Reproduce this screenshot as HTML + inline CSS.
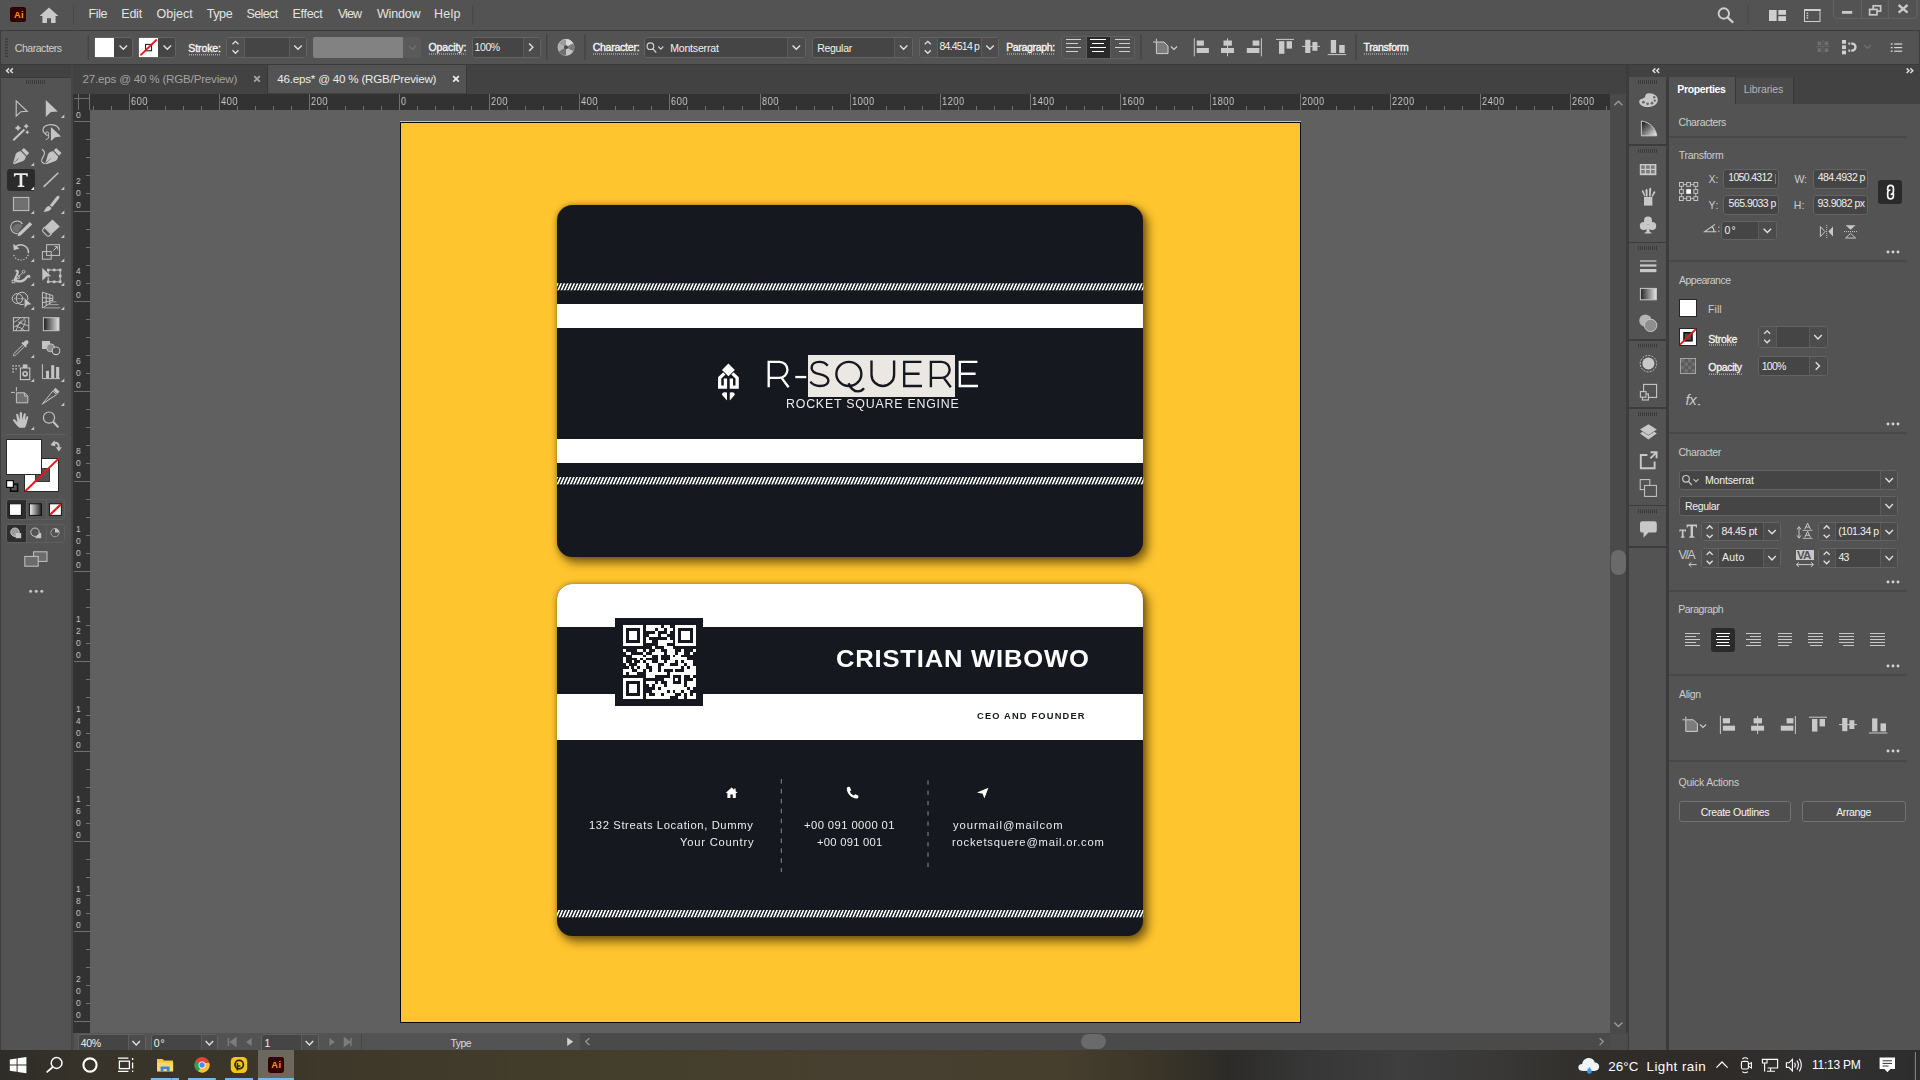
<!DOCTYPE html>
<html><head><meta charset="utf-8"><title>Adobe Illustrator</title><style>
*{margin:0;padding:0;box-sizing:border-box}
html,body{width:1920px;height:1080px;overflow:hidden;background:#535353;font-family:"Liberation Sans",sans-serif}
#root{position:relative;width:1920px;height:1080px;overflow:hidden;background:#535353}
.a{position:absolute}
.t{position:absolute;white-space:pre;}
svg{position:absolute;overflow:visible}
.fld{position:absolute;border:1px solid #636363;border-radius:3px;background:#454545;overflow:hidden}
</style></head>
<body><div id="root">
<!-- s_top -->
<div class="a" style="left:0px;top:0px;width:1920px;height:30px;background:#535353;"></div>
<div class="a" style="left:0px;top:30px;width:1920px;height:1px;background:#3c3c3c;"></div>
<div class="a" style="left:10px;top:7px;width:16px;height:15px;background:#330000;border-radius:2.5px"></div>
<div class="t" style="left:13.97px;top:11px;font-size:9.2px;line-height:9.2px;letter-spacing:0.274px;color:#ff9a00;font-weight:700;font-family:'Liberation Sans',sans-serif;">Ai</div>
<div class="t" style="left:88.40px;top:8px;font-size:12.5px;line-height:12.5px;letter-spacing:-0.321px;color:#e4e4e4;font-weight:400;font-family:'Liberation Sans',sans-serif;">File</div>
<div class="t" style="left:121.30px;top:8px;font-size:12.5px;line-height:12.5px;letter-spacing:-0.246px;color:#e4e4e4;font-weight:400;font-family:'Liberation Sans',sans-serif;">Edit</div>
<div class="t" style="left:156.44px;top:8px;font-size:12.5px;line-height:12.5px;letter-spacing:0.013px;color:#e4e4e4;font-weight:400;font-family:'Liberation Sans',sans-serif;">Object</div>
<div class="t" style="left:206.75px;top:8px;font-size:12.5px;line-height:12.5px;letter-spacing:-0.417px;color:#e4e4e4;font-weight:400;font-family:'Liberation Sans',sans-serif;">Type</div>
<div class="t" style="left:246.44px;top:8px;font-size:12.5px;line-height:12.5px;letter-spacing:-0.613px;color:#e4e4e4;font-weight:400;font-family:'Liberation Sans',sans-serif;">Select</div>
<div class="t" style="left:292.50px;top:8px;font-size:12.5px;line-height:12.5px;letter-spacing:-0.285px;color:#e4e4e4;font-weight:400;font-family:'Liberation Sans',sans-serif;">Effect</div>
<div class="t" style="left:337.94px;top:8px;font-size:12.5px;line-height:12.5px;letter-spacing:-0.938px;color:#e4e4e4;font-weight:400;font-family:'Liberation Sans',sans-serif;">View</div>
<div class="t" style="left:376.94px;top:8px;font-size:12.5px;line-height:12.5px;letter-spacing:-0.167px;color:#e4e4e4;font-weight:400;font-family:'Liberation Sans',sans-serif;">Window</div>
<div class="t" style="left:434.00px;top:8px;font-size:12.5px;line-height:12.5px;letter-spacing:0.271px;color:#e4e4e4;font-weight:400;font-family:'Liberation Sans',sans-serif;">Help</div>
<div class="a" style="left:0px;top:31px;width:1920px;height:32.5px;background:#535353;"></div>
<div class="a" style="left:0px;top:63.5px;width:1920px;height:1.5px;background:#3a3a3a;"></div>
<div class="a" style="left:0px;top:31px;width:1.2px;height:33px;background:#3e3e3e;"></div>
<div class="a" style="left:1918.8px;top:31px;width:1.2000000000000455px;height:33px;background:#3e3e3e;"></div>
<div class="t" style="left:14.78px;top:43px;font-size:10.5px;line-height:10.5px;letter-spacing:-0.450px;color:#cfcfcf;font-weight:400;font-family:'Liberation Sans',sans-serif;">Characters</div>
<div class="fld" style="left:94px;top:37px;width:38.5px;height:20.6px"></div>
<div class="a" style="left:95px;top:38.2px;width:19.200000000000003px;height:18.4px;background:#ffffff;"></div>
<div class="fld" style="left:138.3px;top:37px;width:38.099999999999994px;height:20.6px"></div>
<div class="a" style="left:139.2px;top:38.2px;width:19.100000000000023px;height:18.4px;background:#ffffff;"></div>
<div class="t" style="left:188.33px;top:43px;font-size:10.5px;line-height:10.5px;letter-spacing:-0.103px;color:#f6f6f6;font-weight:400;font-family:'Liberation Sans',sans-serif;-webkit-text-stroke:0.35px #f6f6f6;">Stroke:</div>
<div class="fld" style="left:226.3px;top:37px;width:80.69999999999999px;height:20.6px"></div>
<div class="a" style="left:227.3px;top:38px;width:16.69999999999999px;height:18.6px;background:#4f4f4f;"></div>
<div class="a" style="left:244px;top:38px;width:1px;height:18.6px;background:#5c5c5c;"></div>
<div class="a" style="left:289px;top:38px;width:1px;height:18.6px;background:#5c5c5c;"></div>
<div class="a" style="left:290px;top:38px;width:16px;height:18.6px;background:#4c4c4c;"></div>
<div class="a" style="left:312.8px;top:37px;width:90.19999999999999px;height:20.799999999999997px;background:#828282;border-radius:2px 0 0 2px"></div>
<div class="a" style="left:403px;top:37px;width:18px;height:20.799999999999997px;background:#5a5a5a;border-radius:0 2px 2px 0"></div>
<div class="t" style="left:428.53px;top:42px;font-size:10.5px;line-height:10.5px;letter-spacing:-0.095px;color:#f6f6f6;font-weight:400;font-family:'Liberation Sans',sans-serif;-webkit-text-stroke:0.35px #f6f6f6;">Opacity:</div>
<div class="fld" style="left:471.6px;top:37px;width:69.0px;height:20.6px"></div>
<div class="a" style="left:522.6px;top:38px;width:1.0px;height:18.6px;background:#5c5c5c;"></div>
<div class="a" style="left:523.6px;top:38px;width:16.0px;height:18.6px;background:#4c4c4c;"></div>
<div class="t" style="left:474.61px;top:42px;font-size:10.5px;line-height:10.5px;letter-spacing:-0.442px;color:#f0f0f0;font-weight:400;font-family:'Liberation Sans',sans-serif;">100%</div>
<div class="t" style="left:592.68px;top:42px;font-size:10.5px;line-height:10.5px;letter-spacing:-0.235px;color:#f6f6f6;font-weight:400;font-family:'Liberation Sans',sans-serif;-webkit-text-stroke:0.35px #f6f6f6;">Character:</div>
<div class="fld" style="left:644px;top:37px;width:161.60000000000002px;height:20.6px"></div>
<div class="a" style="left:787.2px;top:38px;width:1.0px;height:18.6px;background:#5c5c5c;"></div>
<div class="a" style="left:788.2px;top:38px;width:16.399999999999977px;height:18.6px;background:#4c4c4c;"></div>
<div class="t" style="left:670.16px;top:43px;font-size:10.5px;line-height:10.5px;letter-spacing:-0.161px;color:#f2f2f2;font-weight:400;font-family:'Liberation Sans',sans-serif;">Montserrat</div>
<div class="fld" style="left:811.6px;top:37px;width:101.0px;height:20.6px"></div>
<div class="a" style="left:894.2px;top:38px;width:1.0px;height:18.6px;background:#5c5c5c;"></div>
<div class="a" style="left:895.2px;top:38px;width:16.399999999999977px;height:18.6px;background:#4c4c4c;"></div>
<div class="t" style="left:817.16px;top:43px;font-size:10.5px;line-height:10.5px;letter-spacing:-0.292px;color:#f2f2f2;font-weight:400;font-family:'Liberation Sans',sans-serif;">Regular</div>
<div class="fld" style="left:918.5px;top:37px;width:80.5px;height:20.6px"></div>
<div class="a" style="left:919.5px;top:38px;width:17.100000000000023px;height:18.6px;background:#4f4f4f;"></div>
<div class="a" style="left:936.6px;top:38px;width:1.0px;height:18.6px;background:#5c5c5c;"></div>
<div class="a" style="left:981.4px;top:38px;width:1.0px;height:18.6px;background:#5c5c5c;"></div>
<div class="a" style="left:982.4px;top:38px;width:15.600000000000023px;height:18.6px;background:#4c4c4c;"></div>
<div class="t" style="left:939.53px;top:41px;font-size:10.5px;line-height:10.5px;letter-spacing:-0.792px;color:#f2f2f2;font-weight:400;font-family:'Liberation Sans',sans-serif;">84.4514 p</div>
<div class="t" style="left:1006.16px;top:42px;font-size:10.5px;line-height:10.5px;letter-spacing:-0.315px;color:#f6f6f6;font-weight:400;font-family:'Liberation Sans',sans-serif;-webkit-text-stroke:0.35px #f6f6f6;">Paragraph:</div>
<div class="a" style="left:1061.3px;top:35.5px;width:73.7px;height:23.4px;border:1px solid #5f5f5f;border-radius:3px;background:#515151"></div>
<div class="a" style="left:1086px;top:36.5px;width:24px;height:21.5px;background:#2a2a2a;"></div>
<div class="a" style="left:1085.5px;top:36.5px;width:0.5px;height:21.5px;background:#5f5f5f;"></div>
<div class="a" style="left:1110px;top:36.5px;width:0.599999999999909px;height:21.5px;background:#5f5f5f;"></div>
<div class="t" style="left:1363.59px;top:42px;font-size:10.5px;line-height:10.5px;letter-spacing:-0.296px;color:#f6f6f6;font-weight:400;font-family:'Liberation Sans',sans-serif;-webkit-text-stroke:0.35px #f6f6f6;">Transform</div>
<!-- s_canvas -->
<div class="a" style="left:72px;top:65px;width:1556.5px;height:28.5px;background:#424242;"></div>
<div class="a" style="left:268px;top:65.3px;width:198px;height:28.200000000000003px;background:#535353;"></div>
<div class="a" style="left:267px;top:65px;width:1px;height:28.5px;background:#383838;"></div>
<div class="a" style="left:466px;top:65px;width:1px;height:28.5px;background:#383838;"></div>
<div class="t" style="left:82.52px;top:73px;font-size:11.6px;line-height:11.6px;letter-spacing:-0.198px;color:#a3a3a3;font-weight:400;font-family:'Liberation Sans',sans-serif;">27.eps @ 40 % (RGB/Preview)</div>
<div class="t" style="left:277.17px;top:73px;font-size:11.6px;line-height:11.6px;letter-spacing:-0.193px;color:#ececec;font-weight:400;font-family:'Liberation Sans',sans-serif;">46.eps* @ 40 % (RGB/Preview)</div>
<div class="a" style="left:90px;top:110px;width:1520px;height:923px;background:#606060;"></div>
<div class="a" style="left:73.4px;top:93.5px;width:1536.6px;height:16.5px;background:#323232;"></div>
<div class="a" style="left:73.4px;top:110px;width:16.599999999999994px;height:923px;background:#323232;"></div>
<div class="t" style="left:130.9px;top:97px;font-size:10.2px;line-height:10.2px;letter-spacing:0.86px;color:#cdcdcd;transform-origin:0 0;transform:scaleX(.88);will-change:transform;">600</div>
<div class="t" style="left:220.9px;top:97px;font-size:10.2px;line-height:10.2px;letter-spacing:0.86px;color:#cdcdcd;transform-origin:0 0;transform:scaleX(.88);will-change:transform;">400</div>
<div class="t" style="left:310.9px;top:97px;font-size:10.2px;line-height:10.2px;letter-spacing:0.86px;color:#cdcdcd;transform-origin:0 0;transform:scaleX(.88);will-change:transform;">200</div>
<div class="t" style="left:400.9px;top:97px;font-size:10.2px;line-height:10.2px;letter-spacing:0.86px;color:#cdcdcd;transform-origin:0 0;transform:scaleX(.88);will-change:transform;">0</div>
<div class="t" style="left:490.9px;top:97px;font-size:10.2px;line-height:10.2px;letter-spacing:0.86px;color:#cdcdcd;transform-origin:0 0;transform:scaleX(.88);will-change:transform;">200</div>
<div class="t" style="left:580.9px;top:97px;font-size:10.2px;line-height:10.2px;letter-spacing:0.86px;color:#cdcdcd;transform-origin:0 0;transform:scaleX(.88);will-change:transform;">400</div>
<div class="t" style="left:670.9px;top:97px;font-size:10.2px;line-height:10.2px;letter-spacing:0.86px;color:#cdcdcd;transform-origin:0 0;transform:scaleX(.88);will-change:transform;">600</div>
<div class="t" style="left:761.9px;top:97px;font-size:10.2px;line-height:10.2px;letter-spacing:0.86px;color:#cdcdcd;transform-origin:0 0;transform:scaleX(.88);will-change:transform;">800</div>
<div class="t" style="left:851.9px;top:97px;font-size:10.2px;line-height:10.2px;letter-spacing:0.86px;color:#cdcdcd;transform-origin:0 0;transform:scaleX(.88);will-change:transform;">1000</div>
<div class="t" style="left:941.9px;top:97px;font-size:10.2px;line-height:10.2px;letter-spacing:0.86px;color:#cdcdcd;transform-origin:0 0;transform:scaleX(.88);will-change:transform;">1200</div>
<div class="t" style="left:1031.9px;top:97px;font-size:10.2px;line-height:10.2px;letter-spacing:0.86px;color:#cdcdcd;transform-origin:0 0;transform:scaleX(.88);will-change:transform;">1400</div>
<div class="t" style="left:1121.9px;top:97px;font-size:10.2px;line-height:10.2px;letter-spacing:0.86px;color:#cdcdcd;transform-origin:0 0;transform:scaleX(.88);will-change:transform;">1600</div>
<div class="t" style="left:1211.9px;top:97px;font-size:10.2px;line-height:10.2px;letter-spacing:0.86px;color:#cdcdcd;transform-origin:0 0;transform:scaleX(.88);will-change:transform;">1800</div>
<div class="t" style="left:1301.9px;top:97px;font-size:10.2px;line-height:10.2px;letter-spacing:0.86px;color:#cdcdcd;transform-origin:0 0;transform:scaleX(.88);will-change:transform;">2000</div>
<div class="t" style="left:1391.9px;top:97px;font-size:10.2px;line-height:10.2px;letter-spacing:0.86px;color:#cdcdcd;transform-origin:0 0;transform:scaleX(.88);will-change:transform;">2200</div>
<div class="t" style="left:1481.9px;top:97px;font-size:10.2px;line-height:10.2px;letter-spacing:0.86px;color:#cdcdcd;transform-origin:0 0;transform:scaleX(.88);will-change:transform;">2400</div>
<div class="t" style="left:1571.9px;top:97px;font-size:10.2px;line-height:10.2px;letter-spacing:0.86px;color:#cdcdcd;transform-origin:0 0;transform:scaleX(.88);will-change:transform;">2600</div>
<div class="t" style="left:75.6px;top:110px;font-size:9.6px;line-height:9.6px;color:#cdcdcd;transform-origin:0 0;transform:scaleX(.88);will-change:transform;">0</div>
<div class="t" style="left:75.6px;top:176px;font-size:9.6px;line-height:9.6px;color:#cdcdcd;transform-origin:0 0;transform:scaleX(.88);will-change:transform;">2</div>
<div class="t" style="left:75.6px;top:188px;font-size:9.6px;line-height:9.6px;color:#cdcdcd;transform-origin:0 0;transform:scaleX(.88);will-change:transform;">0</div>
<div class="t" style="left:75.6px;top:200px;font-size:9.6px;line-height:9.6px;color:#cdcdcd;transform-origin:0 0;transform:scaleX(.88);will-change:transform;">0</div>
<div class="t" style="left:75.6px;top:266px;font-size:9.6px;line-height:9.6px;color:#cdcdcd;transform-origin:0 0;transform:scaleX(.88);will-change:transform;">4</div>
<div class="t" style="left:75.6px;top:278px;font-size:9.6px;line-height:9.6px;color:#cdcdcd;transform-origin:0 0;transform:scaleX(.88);will-change:transform;">0</div>
<div class="t" style="left:75.6px;top:290px;font-size:9.6px;line-height:9.6px;color:#cdcdcd;transform-origin:0 0;transform:scaleX(.88);will-change:transform;">0</div>
<div class="t" style="left:75.6px;top:356px;font-size:9.6px;line-height:9.6px;color:#cdcdcd;transform-origin:0 0;transform:scaleX(.88);will-change:transform;">6</div>
<div class="t" style="left:75.6px;top:368px;font-size:9.6px;line-height:9.6px;color:#cdcdcd;transform-origin:0 0;transform:scaleX(.88);will-change:transform;">0</div>
<div class="t" style="left:75.6px;top:380px;font-size:9.6px;line-height:9.6px;color:#cdcdcd;transform-origin:0 0;transform:scaleX(.88);will-change:transform;">0</div>
<div class="t" style="left:75.6px;top:446px;font-size:9.6px;line-height:9.6px;color:#cdcdcd;transform-origin:0 0;transform:scaleX(.88);will-change:transform;">8</div>
<div class="t" style="left:75.6px;top:458px;font-size:9.6px;line-height:9.6px;color:#cdcdcd;transform-origin:0 0;transform:scaleX(.88);will-change:transform;">0</div>
<div class="t" style="left:75.6px;top:470px;font-size:9.6px;line-height:9.6px;color:#cdcdcd;transform-origin:0 0;transform:scaleX(.88);will-change:transform;">0</div>
<div class="t" style="left:75.6px;top:524px;font-size:9.6px;line-height:9.6px;color:#cdcdcd;transform-origin:0 0;transform:scaleX(.88);will-change:transform;">1</div>
<div class="t" style="left:75.6px;top:536px;font-size:9.6px;line-height:9.6px;color:#cdcdcd;transform-origin:0 0;transform:scaleX(.88);will-change:transform;">0</div>
<div class="t" style="left:75.6px;top:548px;font-size:9.6px;line-height:9.6px;color:#cdcdcd;transform-origin:0 0;transform:scaleX(.88);will-change:transform;">0</div>
<div class="t" style="left:75.6px;top:560px;font-size:9.6px;line-height:9.6px;color:#cdcdcd;transform-origin:0 0;transform:scaleX(.88);will-change:transform;">0</div>
<div class="t" style="left:75.6px;top:614px;font-size:9.6px;line-height:9.6px;color:#cdcdcd;transform-origin:0 0;transform:scaleX(.88);will-change:transform;">1</div>
<div class="t" style="left:75.6px;top:626px;font-size:9.6px;line-height:9.6px;color:#cdcdcd;transform-origin:0 0;transform:scaleX(.88);will-change:transform;">2</div>
<div class="t" style="left:75.6px;top:638px;font-size:9.6px;line-height:9.6px;color:#cdcdcd;transform-origin:0 0;transform:scaleX(.88);will-change:transform;">0</div>
<div class="t" style="left:75.6px;top:650px;font-size:9.6px;line-height:9.6px;color:#cdcdcd;transform-origin:0 0;transform:scaleX(.88);will-change:transform;">0</div>
<div class="t" style="left:75.6px;top:704px;font-size:9.6px;line-height:9.6px;color:#cdcdcd;transform-origin:0 0;transform:scaleX(.88);will-change:transform;">1</div>
<div class="t" style="left:75.6px;top:716px;font-size:9.6px;line-height:9.6px;color:#cdcdcd;transform-origin:0 0;transform:scaleX(.88);will-change:transform;">4</div>
<div class="t" style="left:75.6px;top:728px;font-size:9.6px;line-height:9.6px;color:#cdcdcd;transform-origin:0 0;transform:scaleX(.88);will-change:transform;">0</div>
<div class="t" style="left:75.6px;top:740px;font-size:9.6px;line-height:9.6px;color:#cdcdcd;transform-origin:0 0;transform:scaleX(.88);will-change:transform;">0</div>
<div class="t" style="left:75.6px;top:794px;font-size:9.6px;line-height:9.6px;color:#cdcdcd;transform-origin:0 0;transform:scaleX(.88);will-change:transform;">1</div>
<div class="t" style="left:75.6px;top:806px;font-size:9.6px;line-height:9.6px;color:#cdcdcd;transform-origin:0 0;transform:scaleX(.88);will-change:transform;">6</div>
<div class="t" style="left:75.6px;top:818px;font-size:9.6px;line-height:9.6px;color:#cdcdcd;transform-origin:0 0;transform:scaleX(.88);will-change:transform;">0</div>
<div class="t" style="left:75.6px;top:830px;font-size:9.6px;line-height:9.6px;color:#cdcdcd;transform-origin:0 0;transform:scaleX(.88);will-change:transform;">0</div>
<div class="t" style="left:75.6px;top:884px;font-size:9.6px;line-height:9.6px;color:#cdcdcd;transform-origin:0 0;transform:scaleX(.88);will-change:transform;">1</div>
<div class="t" style="left:75.6px;top:896px;font-size:9.6px;line-height:9.6px;color:#cdcdcd;transform-origin:0 0;transform:scaleX(.88);will-change:transform;">8</div>
<div class="t" style="left:75.6px;top:908px;font-size:9.6px;line-height:9.6px;color:#cdcdcd;transform-origin:0 0;transform:scaleX(.88);will-change:transform;">0</div>
<div class="t" style="left:75.6px;top:920px;font-size:9.6px;line-height:9.6px;color:#cdcdcd;transform-origin:0 0;transform:scaleX(.88);will-change:transform;">0</div>
<div class="t" style="left:75.6px;top:974px;font-size:9.6px;line-height:9.6px;color:#cdcdcd;transform-origin:0 0;transform:scaleX(.88);will-change:transform;">2</div>
<div class="t" style="left:75.6px;top:986px;font-size:9.6px;line-height:9.6px;color:#cdcdcd;transform-origin:0 0;transform:scaleX(.88);will-change:transform;">0</div>
<div class="t" style="left:75.6px;top:998px;font-size:9.6px;line-height:9.6px;color:#cdcdcd;transform-origin:0 0;transform:scaleX(.88);will-change:transform;">0</div>
<div class="t" style="left:75.6px;top:1010px;font-size:9.6px;line-height:9.6px;color:#cdcdcd;transform-origin:0 0;transform:scaleX(.88);will-change:transform;">0</div>
<div class="a" style="left:399.6px;top:120.8px;width:901.6px;height:902.2px;background:#fec52e;"></div>
<div class="a" style="left:400px;top:122px;width:901px;height:901px;border:1px solid #0a0a0a;background:#fec52e"></div>
<div class="a" style="left:399.6px;top:120.8px;width:901.6px;height:1.0px;background:#fec52e;"></div>
<div class="a" style="left:556.8px;top:205px;width:586.6px;height:351.6px;border-radius:15.5px;background:#15181e;box-shadow:4px 5px 10px 1px rgba(45,30,0,.6), 0 0 5px rgba(60,40,0,.38);overflow:hidden"><div class="a" style="left:0;top:99.4px;width:100%;height:23.6px;background:#fff"></div><div class="a" style="left:0;top:234px;width:100%;height:23.7px;background:#fff"></div></div>
<div class="a" style="left:807.8px;top:354.8px;width:147.4000000000001px;height:42.099999999999966px;background:#ebe7e2;"></div>
<div class="a" style="left:556.8px;top:584px;width:586.6px;height:352.4px;border-radius:15.5px;background:#15181e;box-shadow:4px 5px 10px 1px rgba(45,30,0,.6), 0 0 5px rgba(60,40,0,.38);overflow:hidden"><div class="a" style="left:0;top:0;width:100%;height:156.1px;background:#fff"></div><div class="a" style="left:0;top:43.1px;width:100%;height:67.1px;background:#15181e"></div></div>
<div class="a" style="left:615.3px;top:618.1px;width:87.90000000000009px;height:87.69999999999993px;background:#15181e;"></div>
<!-- s_cards -->
<div class="t" style="will-change:transform;left:785.71px;top:398px;font-size:12.4px;line-height:12.4px;letter-spacing:0.772px;color:#ececec;font-weight:400;font-family:'Liberation Sans',sans-serif;">ROCKET SQUARE ENGINE</div>
<div class="t" style="will-change:transform;left:836.48px;top:648px;font-size:23.7px;line-height:23.7px;letter-spacing:0.742px;color:#ffffff;font-weight:700;font-family:'Liberation Sans',sans-serif;transform-origin:0 0;transform:scaleX(1.08);">CRISTIAN WIBOWO</div>
<div class="t" style="will-change:transform;left:977.13px;top:712px;font-size:8.9px;line-height:8.9px;letter-spacing:1.104px;color:#15181e;font-weight:700;font-family:'Liberation Sans',sans-serif;transform-origin:0 0;transform:scaleX(1.05);">CEO AND FOUNDER</div>
<div class="t" style="will-change:transform;left:589.46px;top:820px;font-size:10.6px;line-height:10.6px;letter-spacing:0.574px;color:#ececec;font-weight:400;font-family:'Liberation Sans',sans-serif;transform-origin:0 0;transform:scaleX(1.06);">132 Streats Location, Dummy</div>
<div class="t" style="will-change:transform;left:679.72px;top:837px;font-size:10.6px;line-height:10.6px;letter-spacing:0.721px;color:#ececec;font-weight:400;font-family:'Liberation Sans',sans-serif;transform-origin:0 0;transform:scaleX(1.06);">Your Country</div>
<div class="t" style="will-change:transform;left:804.44px;top:820px;font-size:10.6px;line-height:10.6px;letter-spacing:0.398px;color:#ececec;font-weight:400;font-family:'Liberation Sans',sans-serif;transform-origin:0 0;transform:scaleX(1.06);">+00 091 0000 01</div>
<div class="t" style="will-change:transform;left:817.24px;top:837px;font-size:10.6px;line-height:10.6px;letter-spacing:0.232px;color:#ececec;font-weight:400;font-family:'Liberation Sans',sans-serif;transform-origin:0 0;transform:scaleX(1.06);">+00 091 001</div>
<div class="t" style="will-change:transform;left:953.04px;top:820px;font-size:10.6px;line-height:10.6px;letter-spacing:0.878px;color:#ececec;font-weight:400;font-family:'Liberation Sans',sans-serif;transform-origin:0 0;transform:scaleX(1.06);">yourmail@mailcom</div>
<div class="t" style="will-change:transform;left:952.37px;top:837px;font-size:10.6px;line-height:10.6px;letter-spacing:0.744px;color:#ececec;font-weight:400;font-family:'Liberation Sans',sans-serif;transform-origin:0 0;transform:scaleX(1.06);">rocketsquere@mail.or.com</div>
<!-- s_left -->
<div class="a" style="left:0px;top:65px;width:72px;height:985px;background:#535353;"></div>
<div class="a" style="left:0px;top:64.5px;width:72px;height:12.0px;background:#424242;"></div>
<div class="a" style="left:0px;top:76.5px;width:72px;height:0.7999999999999972px;background:#3a3a3a;"></div>
<div class="a" style="left:0px;top:65px;width:1.2px;height:985px;background:#3e3e3e;"></div>
<div class="a" style="left:71px;top:65px;width:2.4000000000000057px;height:985px;background:#464646;"></div>
<div class="a" style="left:7.2px;top:169.2px;width:27.5px;height:21.6px;background:#2b2b2b;border-radius:3px"></div>
<div class="a" style="left:24.4px;top:457.6px;width:35px;height:34.6px;background:#fff;border:1px solid #2a2a2a"></div>
<div class="a" style="left:34.7px;top:468px;width:15.299999999999997px;height:14.399999999999977px;background:#535353;border:1px solid #3a3a3a"></div>
<div class="a" style="left:6px;top:439.2px;width:35.8px;height:35.6px;background:#fff;border:1px solid #2a2a2a"></div>
<div class="a" style="left:6px;top:499px;width:58.6px;height:20.600000000000023px;border:1px solid #5e5e5e;border-radius:3px;overflow:hidden"><div style="position:absolute;left:0;top:0;width:19px;height:100%;background:#2d2d2d"></div><div style="position:absolute;left:19px;top:0;width:1px;height:100%;background:#5e5e5e"></div><div style="position:absolute;left:38.6px;top:0;width:1px;height:100%;background:#5e5e5e"></div></div>
<div class="a" style="left:6px;top:524.4px;width:58.6px;height:18.399999999999977px;border:1px solid #5e5e5e;border-radius:3px;overflow:hidden"><div style="position:absolute;left:0;top:0;width:19px;height:100%;background:#2d2d2d"></div><div style="position:absolute;left:19px;top:0;width:1px;height:100%;background:#5e5e5e"></div><div style="position:absolute;left:38.6px;top:0;width:1px;height:100%;background:#5e5e5e"></div></div>
<!-- s_right -->
<div class="a" style="left:1610px;top:93.7px;width:16.40000000000009px;height:939.3px;background:#4a4a4a;"></div>
<div class="a" style="left:1626.4px;top:65px;width:2.599999999999909px;height:985px;background:#3c3c3c;"></div>
<div class="a" style="left:1611px;top:550px;width:15px;height:24.6px;background:#6a6a6a;border-radius:7px"></div>
<div class="a" style="left:1629px;top:64.5px;width:291px;height:12.299999999999997px;background:#424242;"></div>
<div class="a" style="left:1629px;top:76.8px;width:37.40000000000009px;height:973.2px;background:#535353;"></div>
<div class="a" style="left:1666.4px;top:76.8px;width:2.599999999999909px;height:973.2px;background:#3c3c3c;"></div>
<div class="a" style="left:1629px;top:144.4px;width:37.40000000000009px;height:1.5999999999999943px;background:#3c3c3c;"></div>
<div class="a" style="left:1629px;top:241.6px;width:37.40000000000009px;height:1.5999999999999943px;background:#3c3c3c;"></div>
<div class="a" style="left:1629px;top:339px;width:37.40000000000009px;height:1.6000000000000227px;background:#3c3c3c;"></div>
<div class="a" style="left:1629px;top:407px;width:37.40000000000009px;height:1.6000000000000227px;background:#3c3c3c;"></div>
<div class="a" style="left:1629px;top:504.6px;width:37.40000000000009px;height:1.6000000000000227px;background:#3c3c3c;"></div>
<div class="a" style="left:1629px;top:546px;width:37.40000000000009px;height:1.6000000000000227px;background:#3c3c3c;"></div>
<div class="a" style="left:1669px;top:76.8px;width:251px;height:27.0px;background:#424242;"></div>
<div class="a" style="left:1669px;top:103.8px;width:251px;height:946.2px;background:#535353;"></div>
<div class="a" style="left:1669px;top:76.8px;width:66px;height:27.200000000000003px;background:#535353;"></div>
<div class="a" style="left:1735px;top:77px;width:1px;height:26.799999999999997px;background:#383838;"></div>
<div class="a" style="left:1736px;top:77.6px;width:57px;height:26.200000000000003px;background:#4b4b4b;"></div>
<div class="a" style="left:1793px;top:77px;width:1px;height:26.799999999999997px;background:#383838;"></div>
<div class="t" style="left:1677.32px;top:84px;font-size:10.5px;line-height:10.5px;letter-spacing:-0.369px;color:#ffffff;font-weight:700;font-family:'Liberation Sans',sans-serif;">Properties</div>
<div class="t" style="left:1743.66px;top:84px;font-size:10.5px;line-height:10.5px;letter-spacing:-0.070px;color:#b4b4b4;font-weight:400;font-family:'Liberation Sans',sans-serif;">Libraries</div>
<div class="t" style="left:1678.47px;top:117px;font-size:10.5px;line-height:10.5px;letter-spacing:-0.384px;color:#cdcdcd;font-weight:400;font-family:'Liberation Sans',sans-serif;">Characters</div>
<div class="a" style="left:1669px;top:136.2px;width:238px;height:2.0px;background:#494949;"></div>
<div class="t" style="left:1678.79px;top:150px;font-size:10.5px;line-height:10.5px;letter-spacing:-0.321px;color:#cdcdcd;font-weight:400;font-family:'Liberation Sans',sans-serif;">Transform</div>
<div class="t" style="left:1708.54px;top:174px;font-size:10.5px;line-height:10.5px;letter-spacing:0.038px;color:#cdcdcd;font-weight:400;font-family:'Liberation Sans',sans-serif;">X:</div>
<div class="fld" style="left:1723px;top:168.8px;width:56px;height:20.0px"></div>
<div class="t" style="left:1728.21px;top:172px;font-size:10.5px;line-height:10.5px;letter-spacing:-0.662px;color:#f0f0f0;font-weight:400;font-family:'Liberation Sans',sans-serif;">1050.4312</div>
<div class="a" style="left:1775px;top:174px;width:1px;height:10px;background:#5a7fb8;"></div>
<div class="t" style="left:1708.54px;top:200px;font-size:10.5px;line-height:10.5px;letter-spacing:0.615px;color:#cdcdcd;font-weight:400;font-family:'Liberation Sans',sans-serif;">Y:</div>
<div class="fld" style="left:1723px;top:195px;width:56px;height:19.599999999999994px"></div>
<div class="t" style="left:1728.58px;top:198px;font-size:10.5px;line-height:10.5px;letter-spacing:-0.524px;color:#f0f0f0;font-weight:400;font-family:'Liberation Sans',sans-serif;">565.9033 p</div>
<div class="t" style="left:1794.45px;top:174px;font-size:10.5px;line-height:10.5px;letter-spacing:-0.102px;color:#cdcdcd;font-weight:400;font-family:'Liberation Sans',sans-serif;">W:</div>
<div class="fld" style="left:1812.5px;top:168.8px;width:55.5px;height:20.0px"></div>
<div class="t" style="left:1817.79px;top:172px;font-size:10.5px;line-height:10.5px;letter-spacing:-0.547px;color:#f0f0f0;font-weight:400;font-family:'Liberation Sans',sans-serif;">484.4932 p</div>
<div class="t" style="left:1793.66px;top:200px;font-size:10.5px;line-height:10.5px;letter-spacing:0.238px;color:#cdcdcd;font-weight:400;font-family:'Liberation Sans',sans-serif;">H:</div>
<div class="fld" style="left:1812.5px;top:195px;width:55.5px;height:19.599999999999994px"></div>
<div class="t" style="left:1817.53px;top:198px;font-size:10.5px;line-height:10.5px;letter-spacing:-0.489px;color:#f0f0f0;font-weight:400;font-family:'Liberation Sans',sans-serif;">93.9082 px</div>
<div class="a" style="left:1878px;top:180px;width:24px;height:23.8px;background:#2a2a2a;border-radius:3px"></div>
<div class="fld" style="left:1721px;top:220.8px;width:56px;height:19.19999999999999px"></div>
<div class="a" style="left:1758px;top:221.8px;width:1px;height:17.19999999999999px;background:#5c5c5c;"></div>
<div class="a" style="left:1759px;top:221.8px;width:17px;height:17.19999999999999px;background:#4c4c4c;"></div>
<div class="t" style="left:1724.58px;top:225px;font-size:10.5px;line-height:10.5px;letter-spacing:1.022px;color:#f0f0f0;font-weight:400;font-family:'Liberation Sans',sans-serif;">0°</div>
<div class="a" style="left:1669px;top:260.4px;width:238px;height:2.0px;background:#494949;"></div>
<div class="t" style="left:1679.00px;top:275px;font-size:10.5px;line-height:10.5px;letter-spacing:-0.514px;color:#cdcdcd;font-weight:400;font-family:'Liberation Sans',sans-serif;">Appearance</div>
<div class="a" style="left:1679px;top:299.4px;width:18px;height:17.6px;background:#fff;border:1px solid #262626"></div>
<div class="t" style="left:1707.96px;top:304px;font-size:10.5px;line-height:10.5px;letter-spacing:0.112px;color:#cdcdcd;font-weight:400;font-family:'Liberation Sans',sans-serif;">Fill</div>
<div class="a" style="left:1679px;top:328px;width:18px;height:17.6px;background:#fff;border:1px solid #262626"></div>
<div class="t" style="left:1708.33px;top:334px;font-size:10.5px;line-height:10.5px;letter-spacing:-0.280px;color:#f4f4f4;font-weight:400;font-family:'Liberation Sans',sans-serif;-webkit-text-stroke:0.3px #f4f4f4;">Stroke</div>
<div class="fld" style="left:1757.5px;top:326px;width:70.0px;height:21.600000000000023px"></div>
<div class="a" style="left:1758.5px;top:327px;width:17.5px;height:19.600000000000023px;background:#4f4f4f;"></div>
<div class="a" style="left:1776px;top:327px;width:1px;height:19.600000000000023px;background:#5c5c5c;"></div>
<div class="a" style="left:1808.8px;top:327px;width:1.0px;height:19.600000000000023px;background:#5c5c5c;"></div>
<div class="a" style="left:1809.8px;top:327px;width:16.700000000000045px;height:19.600000000000023px;background:#4c4c4c;"></div>
<div class="a" style="left:1680px;top:358px;width:16px;height:15.6px;border:1px solid #a4a4a4;background:#5a5a5a"></div>
<div class="t" style="left:1708.33px;top:362px;font-size:10.5px;line-height:10.5px;letter-spacing:-0.320px;color:#f4f4f4;font-weight:400;font-family:'Liberation Sans',sans-serif;-webkit-text-stroke:0.3px #f4f4f4;">Opacity</div>
<div class="fld" style="left:1757.5px;top:355.8px;width:70.0px;height:20.399999999999977px"></div>
<div class="a" style="left:1808.8px;top:356.8px;width:1.0px;height:18.399999999999977px;background:#5c5c5c;"></div>
<div class="a" style="left:1809.8px;top:356.8px;width:16.700000000000045px;height:18.399999999999977px;background:#4c4c4c;"></div>
<div class="t" style="left:1761.71px;top:361px;font-size:10.5px;line-height:10.5px;letter-spacing:-0.742px;color:#f0f0f0;font-weight:400;font-family:'Liberation Sans',sans-serif;">100%</div>
<div class="t" style="left:1685.4px;top:391.6px;font-size:15px;line-height:15px;font-style:italic;color:#c8c8c8;letter-spacing:-0.4px">fx</div>
<div class="a" style="left:1669px;top:431.6px;width:238px;height:2.0px;background:#494949;"></div>
<div class="t" style="left:1678.47px;top:447px;font-size:10.5px;line-height:10.5px;letter-spacing:-0.427px;color:#cdcdcd;font-weight:400;font-family:'Liberation Sans',sans-serif;">Character</div>
<div class="fld" style="left:1679px;top:470px;width:219px;height:19.600000000000023px"></div>
<div class="a" style="left:1880px;top:471px;width:1px;height:17.600000000000023px;background:#5c5c5c;"></div>
<div class="a" style="left:1881px;top:471px;width:16px;height:17.600000000000023px;background:#4c4c4c;"></div>
<div class="t" style="left:1704.96px;top:475px;font-size:10.5px;line-height:10.5px;letter-spacing:-0.138px;color:#f0f0f0;font-weight:400;font-family:'Liberation Sans',sans-serif;">Montserrat</div>
<div class="fld" style="left:1679px;top:496px;width:219px;height:19.600000000000023px"></div>
<div class="a" style="left:1880px;top:497px;width:1px;height:17.600000000000023px;background:#5c5c5c;"></div>
<div class="a" style="left:1881px;top:497px;width:16px;height:17.600000000000023px;background:#4c4c4c;"></div>
<div class="t" style="left:1684.96px;top:501px;font-size:10.5px;line-height:10.5px;letter-spacing:-0.342px;color:#f0f0f0;font-weight:400;font-family:'Liberation Sans',sans-serif;">Regular</div>
<div class="fld" style="left:1700.5px;top:522px;width:80.5px;height:19.399999999999977px"></div>
<div class="a" style="left:1701.5px;top:523px;width:16.5px;height:17.399999999999977px;background:#4f4f4f;"></div>
<div class="a" style="left:1718px;top:523px;width:1px;height:17.399999999999977px;background:#5c5c5c;"></div>
<div class="a" style="left:1763px;top:523px;width:1px;height:17.399999999999977px;background:#5c5c5c;"></div>
<div class="a" style="left:1764px;top:523px;width:16px;height:17.399999999999977px;background:#4c4c4c;"></div>
<div class="t" style="left:1721.53px;top:526px;font-size:10.5px;line-height:10.5px;letter-spacing:-0.340px;color:#f0f0f0;font-weight:400;font-family:'Liberation Sans',sans-serif;">84.45 pt</div>
<div class="fld" style="left:1817.5px;top:522px;width:80.5px;height:19.399999999999977px"></div>
<div class="a" style="left:1818.5px;top:523px;width:16.5px;height:17.399999999999977px;background:#4f4f4f;"></div>
<div class="a" style="left:1835px;top:523px;width:1px;height:17.399999999999977px;background:#5c5c5c;"></div>
<div class="a" style="left:1880px;top:523px;width:1px;height:17.399999999999977px;background:#5c5c5c;"></div>
<div class="a" style="left:1881px;top:523px;width:16px;height:17.399999999999977px;background:#4c4c4c;"></div>
<div class="t" style="left:1838.17px;top:526px;font-size:10.5px;line-height:10.5px;letter-spacing:-0.414px;color:#f0f0f0;font-weight:400;font-family:'Liberation Sans',sans-serif;">(101.34 p</div>
<div class="t" style="left:1678.6px;top:549.4px;font-size:12.5px;line-height:13px;color:#c8c8c8;letter-spacing:-1.6px">V/A</div>
<div class="fld" style="left:1700.5px;top:548px;width:80.5px;height:19.600000000000023px"></div>
<div class="a" style="left:1701.5px;top:549px;width:16.5px;height:17.600000000000023px;background:#4f4f4f;"></div>
<div class="a" style="left:1718px;top:549px;width:1px;height:17.600000000000023px;background:#5c5c5c;"></div>
<div class="a" style="left:1763px;top:549px;width:1px;height:17.600000000000023px;background:#5c5c5c;"></div>
<div class="a" style="left:1764px;top:549px;width:16px;height:17.600000000000023px;background:#4c4c4c;"></div>
<div class="t" style="left:1722.00px;top:552px;font-size:10.5px;line-height:10.5px;letter-spacing:0.214px;color:#f0f0f0;font-weight:400;font-family:'Liberation Sans',sans-serif;">Auto</div>
<div class="a" style="left:1796px;top:549.6px;width:18px;height:10.799999999999955px;background:#c8c8c8;"></div>
<div class="t" style="left:1797px;top:549.6px;font-size:11.5px;line-height:11.5px;color:#535353;letter-spacing:-0.9px;font-weight:700">VA</div>
<div class="fld" style="left:1817.5px;top:548px;width:80.5px;height:19.600000000000023px"></div>
<div class="a" style="left:1818.5px;top:549px;width:16.5px;height:17.600000000000023px;background:#4f4f4f;"></div>
<div class="a" style="left:1835px;top:549px;width:1px;height:17.600000000000023px;background:#5c5c5c;"></div>
<div class="a" style="left:1880px;top:549px;width:1px;height:17.600000000000023px;background:#5c5c5c;"></div>
<div class="a" style="left:1881px;top:549px;width:16px;height:17.600000000000023px;background:#4c4c4c;"></div>
<div class="t" style="left:1838.59px;top:552px;font-size:10.5px;line-height:10.5px;letter-spacing:-1.025px;color:#f0f0f0;font-weight:400;font-family:'Liberation Sans',sans-serif;">43</div>
<div class="a" style="left:1669px;top:589.8px;width:238px;height:2.0px;background:#494949;"></div>
<div class="t" style="left:1678.16px;top:604px;font-size:10.5px;line-height:10.5px;letter-spacing:-0.439px;color:#cdcdcd;font-weight:400;font-family:'Liberation Sans',sans-serif;">Paragraph</div>
<div class="a" style="left:1711px;top:628px;width:24px;height:23.8px;background:#2a2a2a;border-radius:3px"></div>
<div class="a" style="left:1669px;top:673.6px;width:238px;height:2.0px;background:#494949;"></div>
<div class="t" style="left:1679.00px;top:689px;font-size:10.5px;line-height:10.5px;letter-spacing:-0.295px;color:#cdcdcd;font-weight:400;font-family:'Liberation Sans',sans-serif;">Align</div>
<div class="a" style="left:1669px;top:759.6px;width:238px;height:2.0px;background:#494949;"></div>
<div class="t" style="left:1678.53px;top:777px;font-size:10.5px;line-height:10.5px;letter-spacing:-0.249px;color:#cdcdcd;font-weight:400;font-family:'Liberation Sans',sans-serif;">Quick Actions</div>
<div class="a" style="left:1679px;top:801px;width:112.40000000000009px;height:20.799999999999955px;border:1px solid #727272;border-radius:3px;background:#4f4f4f"></div>
<div class="t" style="left:1700.67px;top:807px;font-size:10.5px;line-height:10.5px;letter-spacing:-0.292px;color:#f4f4f4;font-weight:400;font-family:'Liberation Sans',sans-serif;">Create Outlines</div>
<div class="a" style="left:1801.6px;top:801px;width:104.20000000000005px;height:20.799999999999955px;border:1px solid #727272;border-radius:3px;background:#4f4f4f"></div>
<div class="t" style="left:1836.20px;top:807px;font-size:10.5px;line-height:10.5px;letter-spacing:-0.376px;color:#f4f4f4;font-weight:400;font-family:'Liberation Sans',sans-serif;">Arrange</div>
<!-- s_bottom -->
<div class="a" style="left:72px;top:1033px;width:1556px;height:16.59999999999991px;background:#4a4a4a;"></div>
<div class="a" style="left:74px;top:1033px;width:506px;height:16.59999999999991px;background:#535353;"></div>
<div class="a" style="left:78.3px;top:1034px;width:67.50000000000001px;height:17px;border:1px solid #626262;border-radius:3px 3px 0 0;background:#454545"></div>
<div class="a" style="left:127.6px;top:1035px;width:1.0px;height:15px;background:#5c5c5c;"></div>
<div class="a" style="left:128.6px;top:1035px;width:16.200000000000017px;height:15px;background:#4c4c4c;"></div>
<div class="t" style="left:80.79px;top:1038px;font-size:10.5px;line-height:10.5px;letter-spacing:-0.311px;color:#f0f0f0;font-weight:400;font-family:'Liberation Sans',sans-serif;">40%</div>
<div class="a" style="left:151px;top:1034px;width:67.4px;height:17px;border:1px solid #626262;border-radius:3px 3px 0 0;background:#454545"></div>
<div class="a" style="left:201px;top:1035px;width:1px;height:15px;background:#5c5c5c;"></div>
<div class="a" style="left:202px;top:1035px;width:15.400000000000006px;height:15px;background:#4c4c4c;"></div>
<div class="t" style="left:153.78px;top:1038px;font-size:10.5px;line-height:10.5px;letter-spacing:0.823px;color:#f0f0f0;font-weight:400;font-family:'Liberation Sans',sans-serif;">0°</div>
<div class="a" style="left:261px;top:1034px;width:58.39999999999998px;height:17px;border:1px solid #626262;border-radius:3px 3px 0 0;background:#454545"></div>
<div class="a" style="left:301px;top:1035px;width:1px;height:15px;background:#5c5c5c;"></div>
<div class="a" style="left:302px;top:1035px;width:16.399999999999977px;height:15px;background:#4c4c4c;"></div>
<div class="t" style="left:264.41px;top:1038px;font-size:10.5px;line-height:10.5px;letter-spacing:-0.167px;color:#f0f0f0;font-weight:400;font-family:'Liberation Sans',sans-serif;">1</div>
<div class="a" style="left:361px;top:1034px;width:1px;height:16px;background:#464646;"></div>
<div class="t" style="left:450.59px;top:1038px;font-size:10.5px;line-height:10.5px;letter-spacing:-0.617px;color:#d8d8d8;font-weight:400;font-family:'Liberation Sans',sans-serif;">Type</div>
<div class="a" style="left:1080.6px;top:1034.4px;width:25.4px;height:15px;background:#6a6a6a;border-radius:7.5px"></div>
<div class="a" style="left:1610px;top:1033.6px;width:16.40000000000009px;height:16.0px;background:#4d4d4d;"></div>
<div class="a" style="left:0;top:1049.6px;width:1920px;height:30.4px;background:linear-gradient(90deg,#2f2d29 0,#37332a 90px,#3d3829 330px,#443e2c 620px,#474030 860px,#463f2e 1060px,#3a3528 1160px,#2c2b29 1230px,#363636 1300px,#3e3e3e 1400px,#393837 1500px,#302d29 1600px,#2e2b28 1720px,#323131 1810px,#2e2d2d 1920px)"></div>
<div class="a" style="left:258px;top:1049.6px;width:36px;height:30.40000000000009px;background:#6c685e;"></div>
<div class="a" style="left:268px;top:1057px;width:16px;height:15.6px;border-radius:2.4px;background:#330000"></div>
<div class="t" style="left:271.37px;top:1060px;font-size:9.4px;line-height:9.4px;letter-spacing:0.493px;color:#ff9a00;font-weight:700;font-family:'Liberation Sans',sans-serif;">Ai</div>
<div class="t" style="left:1608.33px;top:1060px;font-size:13.4px;line-height:13.4px;letter-spacing:0.019px;color:#ffffff;font-weight:400;font-family:'Liberation Sans',sans-serif;">26°C</div>
<div class="t" style="left:1646.53px;top:1060px;font-size:13.4px;line-height:13.4px;letter-spacing:0.445px;color:#ffffff;font-weight:400;font-family:'Liberation Sans',sans-serif;">Light rain</div>
<div class="t" style="left:1812.10px;top:1059px;font-size:12px;line-height:12px;letter-spacing:-0.271px;color:#ffffff;font-weight:400;font-family:'Liberation Sans',sans-serif;">11:13 PM</div>
<svg id="ov" style="left:0;top:0;pointer-events:none" width="1920" height="1080" viewBox="0 0 1920 1080"><path d="M49,7.6 L39.6,16 L42.4,16 L42.4,23 L47,23 L47,18.2 L51,18.2 L51,23 L55.6,23 L55.6,16 L58.4,16 Z" fill="#c9c9c9"/>
<line x1="73.5" y1="5" x2="73.5" y2="25" stroke="#484848" stroke-width="1" />
<line x1="472.7" y1="5" x2="472.7" y2="25" stroke="#484848" stroke-width="1" />
<circle cx="1723.8" cy="13.5" r="5.2" fill="none" stroke="#cfcfcf" stroke-width="1.9"/><line x1="1727.6" y1="17.4" x2="1733.2" y2="22.6" stroke="#cfcfcf" stroke-width="2.2"/>
<line x1="1748" y1="5" x2="1748" y2="24.5" stroke="#484848" stroke-width="1" />
<rect x="1769" y="10" width="7.599999999999909" height="11" fill="#cfcfcf" />
<rect x="1778.3" y="10" width="7.7000000000000455" height="4.800000000000001" fill="#cfcfcf" />
<rect x="1778.3" y="16.2" width="7.7000000000000455" height="4.800000000000001" fill="#cfcfcf" />
<rect x="1804.5" y="9.5" width="15.5" height="12" fill="none" stroke="#cfcfcf" stroke-width="1"/><rect x="1804" y="9" width="16.5" height="2" fill="#cfcfcf"/>
<rect x="1806.6" y="12.6" width="1.6000000000001364" height="1.4000000000000004" fill="#cfcfcf" />
<rect x="1806.6" y="14.9" width="1.6000000000001364" height="1.4000000000000004" fill="#cfcfcf" />
<rect x="1806.6" y="17.2" width="1.6000000000001364" height="1.3999999999999986" fill="#cfcfcf" />
<path d="M1833.5,0 V15.5 Q1833.5,18.3 1836.5,18.3 H1914 Q1917,18.3 1917,15.5 V0" fill="none" stroke="#646464" stroke-width="1"/>
<line x1="1861.6" y1="0" x2="1861.6" y2="18" stroke="#646464" stroke-width="1" />
<line x1="1888.3" y1="0" x2="1888.3" y2="18" stroke="#646464" stroke-width="1" />
<rect x="1842" y="11" width="10.200000000000045" height="2.8000000000000007" fill="#c8c8c8" />
<rect x="1873.2" y="5.8" width="7.4" height="5.4" fill="none" stroke="#c8c8c8" stroke-width="1.7"/><rect x="1869.6" y="9.4" width="7.4" height="5.4" fill="#535353" stroke="#c8c8c8" stroke-width="1.7"/>
<path d="M1898.6,5 L1907.6,12.6 M1907.6,5 L1898.6,12.6" stroke="#c8c8c8" stroke-width="2.3" fill="none"/>
<rect x="5" y="38.3" width="3" height="1.3000000000000043" fill="#3a3a3a" />
<rect x="5" y="41.199999999999996" width="3" height="1.3000000000000043" fill="#3a3a3a" />
<rect x="5" y="44.099999999999994" width="3" height="1.3000000000000043" fill="#3a3a3a" />
<rect x="5" y="47.0" width="3" height="1.2999999999999972" fill="#3a3a3a" />
<rect x="5" y="49.9" width="3" height="1.3000000000000043" fill="#3a3a3a" />
<rect x="5" y="52.8" width="3" height="1.3000000000000043" fill="#3a3a3a" />
<rect x="5" y="55.699999999999996" width="3" height="1.3000000000000043" fill="#3a3a3a" />
<line x1="88.3" y1="35" x2="88.3" y2="60" stroke="#444" stroke-width="1.4" />
<path d="M119.55,45.4 L123.3,49.199999999999996 L127.05,45.4" fill="none" stroke="#e0e0e0" stroke-width="1.4"/>
<rect x="145.6" y="44.4" width="6" height="6.4" fill="none" stroke="#111" stroke-width="1"/>
<line x1="140.4" y1="55.4" x2="156.8" y2="39.5" stroke="#f0141e" stroke-width="1.8" />
<path d="M163.55,45.4 L167.3,49.199999999999996 L171.05,45.4" fill="none" stroke="#e0e0e0" stroke-width="1.4"/>
<line x1="189" y1="54.8" x2="220" y2="54.8" stroke="#d0d0d0" stroke-width="1" stroke-dasharray="1 1"/>
<path d="M232.5,44.3 L235.5,41.3 L238.5,44.3" fill="none" stroke="#e0e0e0" stroke-width="1.3"/>
<path d="M232.5,50.3 L235.5,53.3 L238.5,50.3" fill="none" stroke="#e0e0e0" stroke-width="1.3"/>
<path d="M294.25,45.4 L298,49.199999999999996 L301.75,45.4" fill="none" stroke="#e0e0e0" stroke-width="1.4"/>
<path d="M409.0,45.75 L412.5,49.25 L416.0,45.75" fill="none" stroke="#6e6e6e" stroke-width="1.4"/>
<line x1="429" y1="54" x2="465.5" y2="54" stroke="#d0d0d0" stroke-width="1" stroke-dasharray="1 1"/>
<path d="M529.1,43.55 L532.9,47.3 L529.1,51.05" fill="none" stroke="#e0e0e0" stroke-width="1.4"/>
<line x1="546.7" y1="34" x2="546.7" y2="60" stroke="#444" stroke-width="1.4" />
<circle cx="566" cy="47.3" r="8" fill="#9a9a9a"/><circle cx="566" cy="47.3" r="8" fill="none" stroke="#bdbdbd" stroke-width="1"/>
<path d="M566,47.3 L566,39.3 A8,8 0 0 1 573,43.5 Z" fill="#d8d8d8"/><path d="M566,47.3 L573,43.5 A8,8 0 0 1 573,51.3 Z" fill="#7a7a7a"/><path d="M566,47.3 L573,51.3 A8,8 0 0 1 566,55.3 Z" fill="#c4c4c4"/><path d="M566,47.3 L566,55.3 A8,8 0 0 1 559,51.3 Z" fill="#6e6e6e"/><path d="M566,47.3 L559,51.3 A8,8 0 0 1 559,43.3 Z" fill="#b0b0b0"/><circle cx="566" cy="47.3" r="2" fill="#4a4a4a"/>
<line x1="585" y1="34" x2="585" y2="60" stroke="#444" stroke-width="1.4" />
<line x1="593" y1="54" x2="638.6" y2="54" stroke="#d0d0d0" stroke-width="1" stroke-dasharray="1 1"/>
<circle cx="650.4" cy="46.2" r="3.3" fill="none" stroke="#cfcfcf" stroke-width="1.2"/><line x1="652.8" y1="48.8" x2="656.3" y2="52.6" stroke="#cfcfcf" stroke-width="1.3"/>
<path d="M658.3,46.5 L660.8,49.099999999999994 L663.3,46.5" fill="none" stroke="#cfcfcf" stroke-width="1.1"/>
<path d="M792.55,45.4 L796.3,49.199999999999996 L800.05,45.4" fill="none" stroke="#e0e0e0" stroke-width="1.4"/>
<path d="M899.85,45.4 L903.6,49.199999999999996 L907.35,45.4" fill="none" stroke="#e0e0e0" stroke-width="1.4"/>
<path d="M924.8,44.3 L927.8,41.3 L930.8,44.3" fill="none" stroke="#e0e0e0" stroke-width="1.3"/>
<path d="M924.8,50.3 L927.8,53.3 L930.8,50.3" fill="none" stroke="#e0e0e0" stroke-width="1.3"/>
<path d="M986.25,45.4 L990,49.199999999999996 L993.75,45.4" fill="none" stroke="#e0e0e0" stroke-width="1.4"/>
<line x1="1007" y1="54" x2="1054.3" y2="54" stroke="#d0d0d0" stroke-width="1" stroke-dasharray="1 1"/>
<rect x="1066" y="39.0" width="15" height="1.0" fill="#cfcfcf" />
<rect x="1066" y="43.0" width="12" height="1.0" fill="#cfcfcf" />
<rect x="1066" y="47.0" width="15" height="1.0" fill="#cfcfcf" />
<rect x="1066" y="51.0" width="12" height="1.0" fill="#cfcfcf" />
<rect x="1090" y="39.0" width="16" height="1.0" fill="#ffffff" />
<rect x="1092" y="43.0" width="12" height="1.0" fill="#ffffff" />
<rect x="1090" y="47.0" width="16" height="1.0" fill="#ffffff" />
<rect x="1092" y="51.0" width="12" height="1.0" fill="#ffffff" />
<rect x="1115" y="39.0" width="15" height="1.0" fill="#cfcfcf" />
<rect x="1119" y="43.0" width="11" height="1.0" fill="#cfcfcf" />
<rect x="1115" y="47.0" width="15" height="1.0" fill="#cfcfcf" />
<rect x="1119" y="51.0" width="11" height="1.0" fill="#cfcfcf" />
<line x1="1141" y1="34" x2="1141" y2="60" stroke="#444" stroke-width="1.4" />
<path d="M1156.4,42.0 H1164 L1168,46.0 V53.599999999999994 H1156.4 Z" fill="#7c7c7c" stroke="#cfcfcf" stroke-width="1"/>
<line x1="1153" y1="42.0" x2="1156" y2="42.0" stroke="#cfcfcf" stroke-width="1" />
<line x1="1156.4" y1="38.8" x2="1156.4" y2="41.8" stroke="#cfcfcf" stroke-width="1" />
<path d="M1171.0,46.5 L1174,49.5 L1177.0,46.5" fill="none" stroke="#cfcfcf" stroke-width="1.2"/>
<line x1="1194.3" y1="38.3" x2="1194.3" y2="56.3" stroke="#c9c9c9" stroke-width="1" />
<rect x="1196.7" y="40.5" width="7.199999999999818" height="5.199999999999996" fill="#c9c9c9" />
<rect x="1196.7" y="48.0" width="12.199999999999818" height="5.0" fill="#c9c9c9" />
<line x1="1227.5" y1="38.3" x2="1227.5" y2="56.3" stroke="#c9c9c9" stroke-width="1" />
<rect x="1223.5" y="40.5" width="8.400000000000091" height="5.199999999999996" fill="#c9c9c9" />
<rect x="1221.0" y="48.0" width="13.0" height="5.0" fill="#c9c9c9" />
<line x1="1261.4" y1="38.3" x2="1261.4" y2="56.3" stroke="#c9c9c9" stroke-width="1" />
<rect x="1252.6000000000001" y="40.5" width="6.7999999999999545" height="5.199999999999996" fill="#c9c9c9" />
<rect x="1246.8000000000002" y="48.0" width="12.599999999999909" height="5.0" fill="#c9c9c9" />
<line x1="1276" y1="39.4" x2="1294" y2="39.4" stroke="#c9c9c9" stroke-width="1" />
<rect x="1279" y="41.199999999999996" width="5.400000000000091" height="12.600000000000001" fill="#c9c9c9" />
<rect x="1286.6" y="41.199999999999996" width="5.400000000000091" height="7.399999999999999" fill="#c9c9c9" />
<line x1="1302" y1="46.4" x2="1320" y2="46.4" stroke="#c9c9c9" stroke-width="1" />
<rect x="1305.2" y="39.8" width="5.2000000000000455" height="13.200000000000003" fill="#c9c9c9" />
<rect x="1312.4" y="42.0" width="5.0" height="8.799999999999997" fill="#c9c9c9" />
<line x1="1327.7" y1="54.6" x2="1346.1000000000001" y2="54.6" stroke="#c9c9c9" stroke-width="1" />
<rect x="1330.8" y="40.0" width="5.300000000000182" height="13.0" fill="#c9c9c9" />
<rect x="1339.2" y="45.0" width="5.5" height="8.0" fill="#c9c9c9" />
<line x1="1356" y1="34" x2="1356" y2="60" stroke="#444" stroke-width="1.4" />
<line x1="1364" y1="54" x2="1408" y2="54" stroke="#d0d0d0" stroke-width="1" stroke-dasharray="1 1"/>
<rect x="1817.6" y="41.6" width="3.599999999999909" height="3.6000000000000014" fill="#707070" />
<rect x="1824.6" y="41.6" width="3.599999999999909" height="3.6000000000000014" fill="#707070" />
<rect x="1817.6" y="48.4" width="3.599999999999909" height="3.6000000000000014" fill="#707070" />
<rect x="1824.6" y="48.4" width="3.599999999999909" height="3.6000000000000014" fill="#707070" />
<line x1="1822.9" y1="39.5" x2="1822.9" y2="53.6" stroke="#6a6a6a" stroke-width="0.8" />
<line x1="1815.6" y1="46.6" x2="1829.8" y2="46.6" stroke="#6a6a6a" stroke-width="0.8" />
<rect x="1842" y="40" width="4" height="3.799999999999997" fill="#cfcfcf" />
<rect x="1842" y="45.3" width="4" height="3.799999999999997" fill="#cfcfcf" />
<rect x="1842" y="50.6" width="4" height="3.799999999999997" fill="#cfcfcf" />
<path d="M1848.4,43.6 H1852 A3.5,3.5 0 0 1 1852,50.6 H1848.4" fill="none" stroke="#cfcfcf" stroke-width="2.3"/>
<rect x="1850.2" y="42" width="1.0" height="10" fill="#535353" />
<path d="M1864.0,44.75 L1867.5,48.25 L1871.0,44.75" fill="none" stroke="#707070" stroke-width="1.4"/>
<rect x="1890.8" y="43.3" width="1.7999999999999545" height="1.3999999999999986" fill="#d4d4d4" />
<rect x="1894.2" y="43.4" width="8.0" height="1.1999999999999957" fill="#d4d4d4" />
<rect x="1890.8" y="46.9" width="1.7999999999999545" height="1.3999999999999986" fill="#d4d4d4" />
<rect x="1894.2" y="47.0" width="8.0" height="1.1999999999999957" fill="#d4d4d4" />
<rect x="1890.8" y="50.5" width="1.7999999999999545" height="1.3999999999999986" fill="#d4d4d4" />
<rect x="1894.2" y="50.6" width="8.0" height="1.1999999999999957" fill="#d4d4d4" />
<path d="M254.2,76.10000000000001 L259.8,81.7 M259.8,76.10000000000001 L254.2,81.7" stroke="#a8a8a8" stroke-width="1.7"/>
<path d="M453.2,76.10000000000001 L458.8,81.7 M458.8,76.10000000000001 L453.2,81.7" stroke="#f0f0f0" stroke-width="1.7"/>
<line x1="78.5" y1="94" x2="78.5" y2="110" stroke="#707070" stroke-width="1" />
<line x1="74" y1="98.5" x2="89" y2="98.5" stroke="#707070" stroke-width="1" />
<line x1="89.5" y1="94" x2="89.5" y2="110" stroke="#707070" stroke-width="1" />
<line x1="129.5" y1="94" x2="129.5" y2="110" stroke="#707070" stroke-width="1" />
<line x1="219.5" y1="94" x2="219.5" y2="110" stroke="#707070" stroke-width="1" />
<line x1="309.5" y1="94" x2="309.5" y2="110" stroke="#707070" stroke-width="1" />
<line x1="399.5" y1="94" x2="399.5" y2="110" stroke="#707070" stroke-width="1" />
<line x1="489.5" y1="94" x2="489.5" y2="110" stroke="#707070" stroke-width="1" />
<line x1="579.5" y1="94" x2="579.5" y2="110" stroke="#707070" stroke-width="1" />
<line x1="669.5" y1="94" x2="669.5" y2="110" stroke="#707070" stroke-width="1" />
<line x1="760.5" y1="94" x2="760.5" y2="110" stroke="#707070" stroke-width="1" />
<line x1="850.5" y1="94" x2="850.5" y2="110" stroke="#707070" stroke-width="1" />
<line x1="940.5" y1="94" x2="940.5" y2="110" stroke="#707070" stroke-width="1" />
<line x1="1030.5" y1="94" x2="1030.5" y2="110" stroke="#707070" stroke-width="1" />
<line x1="1120.5" y1="94" x2="1120.5" y2="110" stroke="#707070" stroke-width="1" />
<line x1="1210.5" y1="94" x2="1210.5" y2="110" stroke="#707070" stroke-width="1" />
<line x1="1300.5" y1="94" x2="1300.5" y2="110" stroke="#707070" stroke-width="1" />
<line x1="1390.5" y1="94" x2="1390.5" y2="110" stroke="#707070" stroke-width="1" />
<line x1="1480.5" y1="94" x2="1480.5" y2="110" stroke="#707070" stroke-width="1" />
<line x1="1570.5" y1="94" x2="1570.5" y2="110" stroke="#707070" stroke-width="1" />
<line x1="93.5" y1="106" x2="93.5" y2="110" stroke="#707070" stroke-width="1" />
<line x1="111.5" y1="106" x2="111.5" y2="110" stroke="#707070" stroke-width="1" />
<line x1="147.5" y1="106" x2="147.5" y2="110" stroke="#707070" stroke-width="1" />
<line x1="165.5" y1="106" x2="165.5" y2="110" stroke="#707070" stroke-width="1" />
<line x1="183.5" y1="106" x2="183.5" y2="110" stroke="#707070" stroke-width="1" />
<line x1="201.5" y1="106" x2="201.5" y2="110" stroke="#707070" stroke-width="1" />
<line x1="237.5" y1="106" x2="237.5" y2="110" stroke="#707070" stroke-width="1" />
<line x1="255.5" y1="106" x2="255.5" y2="110" stroke="#707070" stroke-width="1" />
<line x1="273.5" y1="106" x2="273.5" y2="110" stroke="#707070" stroke-width="1" />
<line x1="291.5" y1="106" x2="291.5" y2="110" stroke="#707070" stroke-width="1" />
<line x1="327.5" y1="106" x2="327.5" y2="110" stroke="#707070" stroke-width="1" />
<line x1="345.5" y1="106" x2="345.5" y2="110" stroke="#707070" stroke-width="1" />
<line x1="363.5" y1="106" x2="363.5" y2="110" stroke="#707070" stroke-width="1" />
<line x1="381.5" y1="106" x2="381.5" y2="110" stroke="#707070" stroke-width="1" />
<line x1="417.5" y1="106" x2="417.5" y2="110" stroke="#707070" stroke-width="1" />
<line x1="435.5" y1="106" x2="435.5" y2="110" stroke="#707070" stroke-width="1" />
<line x1="453.5" y1="106" x2="453.5" y2="110" stroke="#707070" stroke-width="1" />
<line x1="471.5" y1="106" x2="471.5" y2="110" stroke="#707070" stroke-width="1" />
<line x1="507.5" y1="106" x2="507.5" y2="110" stroke="#707070" stroke-width="1" />
<line x1="525.5" y1="106" x2="525.5" y2="110" stroke="#707070" stroke-width="1" />
<line x1="543.5" y1="106" x2="543.5" y2="110" stroke="#707070" stroke-width="1" />
<line x1="561.5" y1="106" x2="561.5" y2="110" stroke="#707070" stroke-width="1" />
<line x1="597.5" y1="106" x2="597.5" y2="110" stroke="#707070" stroke-width="1" />
<line x1="615.5" y1="106" x2="615.5" y2="110" stroke="#707070" stroke-width="1" />
<line x1="633.5" y1="106" x2="633.5" y2="110" stroke="#707070" stroke-width="1" />
<line x1="651.5" y1="106" x2="651.5" y2="110" stroke="#707070" stroke-width="1" />
<line x1="687.5" y1="106" x2="687.5" y2="110" stroke="#707070" stroke-width="1" />
<line x1="705.5" y1="106" x2="705.5" y2="110" stroke="#707070" stroke-width="1" />
<line x1="723.5" y1="106" x2="723.5" y2="110" stroke="#707070" stroke-width="1" />
<line x1="742.5" y1="106" x2="742.5" y2="110" stroke="#707070" stroke-width="1" />
<line x1="778.5" y1="106" x2="778.5" y2="110" stroke="#707070" stroke-width="1" />
<line x1="796.5" y1="106" x2="796.5" y2="110" stroke="#707070" stroke-width="1" />
<line x1="814.5" y1="106" x2="814.5" y2="110" stroke="#707070" stroke-width="1" />
<line x1="832.5" y1="106" x2="832.5" y2="110" stroke="#707070" stroke-width="1" />
<line x1="868.5" y1="106" x2="868.5" y2="110" stroke="#707070" stroke-width="1" />
<line x1="886.5" y1="106" x2="886.5" y2="110" stroke="#707070" stroke-width="1" />
<line x1="904.5" y1="106" x2="904.5" y2="110" stroke="#707070" stroke-width="1" />
<line x1="922.5" y1="106" x2="922.5" y2="110" stroke="#707070" stroke-width="1" />
<line x1="958.5" y1="106" x2="958.5" y2="110" stroke="#707070" stroke-width="1" />
<line x1="976.5" y1="106" x2="976.5" y2="110" stroke="#707070" stroke-width="1" />
<line x1="994.5" y1="106" x2="994.5" y2="110" stroke="#707070" stroke-width="1" />
<line x1="1012.5" y1="106" x2="1012.5" y2="110" stroke="#707070" stroke-width="1" />
<line x1="1048.5" y1="106" x2="1048.5" y2="110" stroke="#707070" stroke-width="1" />
<line x1="1066.5" y1="106" x2="1066.5" y2="110" stroke="#707070" stroke-width="1" />
<line x1="1084.5" y1="106" x2="1084.5" y2="110" stroke="#707070" stroke-width="1" />
<line x1="1102.5" y1="106" x2="1102.5" y2="110" stroke="#707070" stroke-width="1" />
<line x1="1138.5" y1="106" x2="1138.5" y2="110" stroke="#707070" stroke-width="1" />
<line x1="1156.5" y1="106" x2="1156.5" y2="110" stroke="#707070" stroke-width="1" />
<line x1="1174.5" y1="106" x2="1174.5" y2="110" stroke="#707070" stroke-width="1" />
<line x1="1192.5" y1="106" x2="1192.5" y2="110" stroke="#707070" stroke-width="1" />
<line x1="1228.5" y1="106" x2="1228.5" y2="110" stroke="#707070" stroke-width="1" />
<line x1="1246.5" y1="106" x2="1246.5" y2="110" stroke="#707070" stroke-width="1" />
<line x1="1264.5" y1="106" x2="1264.5" y2="110" stroke="#707070" stroke-width="1" />
<line x1="1282.5" y1="106" x2="1282.5" y2="110" stroke="#707070" stroke-width="1" />
<line x1="1318.5" y1="106" x2="1318.5" y2="110" stroke="#707070" stroke-width="1" />
<line x1="1336.5" y1="106" x2="1336.5" y2="110" stroke="#707070" stroke-width="1" />
<line x1="1354.5" y1="106" x2="1354.5" y2="110" stroke="#707070" stroke-width="1" />
<line x1="1372.5" y1="106" x2="1372.5" y2="110" stroke="#707070" stroke-width="1" />
<line x1="1408.5" y1="106" x2="1408.5" y2="110" stroke="#707070" stroke-width="1" />
<line x1="1426.5" y1="106" x2="1426.5" y2="110" stroke="#707070" stroke-width="1" />
<line x1="1444.5" y1="106" x2="1444.5" y2="110" stroke="#707070" stroke-width="1" />
<line x1="1462.5" y1="106" x2="1462.5" y2="110" stroke="#707070" stroke-width="1" />
<line x1="1498.5" y1="106" x2="1498.5" y2="110" stroke="#707070" stroke-width="1" />
<line x1="1516.5" y1="106" x2="1516.5" y2="110" stroke="#707070" stroke-width="1" />
<line x1="1534.5" y1="106" x2="1534.5" y2="110" stroke="#707070" stroke-width="1" />
<line x1="1552.5" y1="106" x2="1552.5" y2="110" stroke="#707070" stroke-width="1" />
<line x1="1588.5" y1="106" x2="1588.5" y2="110" stroke="#707070" stroke-width="1" />
<line x1="1606.5" y1="106" x2="1606.5" y2="110" stroke="#707070" stroke-width="1" />
<line x1="74" y1="121.5" x2="90" y2="121.5" stroke="#707070" stroke-width="1" />
<line x1="74" y1="211.5" x2="90" y2="211.5" stroke="#707070" stroke-width="1" />
<line x1="74" y1="301.5" x2="90" y2="301.5" stroke="#707070" stroke-width="1" />
<line x1="74" y1="391.5" x2="90" y2="391.5" stroke="#707070" stroke-width="1" />
<line x1="74" y1="481.5" x2="90" y2="481.5" stroke="#707070" stroke-width="1" />
<line x1="74" y1="571.5" x2="90" y2="571.5" stroke="#707070" stroke-width="1" />
<line x1="74" y1="661.5" x2="90" y2="661.5" stroke="#707070" stroke-width="1" />
<line x1="74" y1="751.5" x2="90" y2="751.5" stroke="#707070" stroke-width="1" />
<line x1="74" y1="841.5" x2="90" y2="841.5" stroke="#707070" stroke-width="1" />
<line x1="74" y1="931.5" x2="90" y2="931.5" stroke="#707070" stroke-width="1" />
<line x1="74" y1="1021.5" x2="90" y2="1021.5" stroke="#707070" stroke-width="1" />
<line x1="86" y1="139.5" x2="90" y2="139.5" stroke="#707070" stroke-width="1" />
<line x1="86" y1="157.5" x2="90" y2="157.5" stroke="#707070" stroke-width="1" />
<line x1="86" y1="175.5" x2="90" y2="175.5" stroke="#707070" stroke-width="1" />
<line x1="86" y1="193.5" x2="90" y2="193.5" stroke="#707070" stroke-width="1" />
<line x1="86" y1="229.5" x2="90" y2="229.5" stroke="#707070" stroke-width="1" />
<line x1="86" y1="247.5" x2="90" y2="247.5" stroke="#707070" stroke-width="1" />
<line x1="86" y1="265.5" x2="90" y2="265.5" stroke="#707070" stroke-width="1" />
<line x1="86" y1="283.5" x2="90" y2="283.5" stroke="#707070" stroke-width="1" />
<line x1="86" y1="319.5" x2="90" y2="319.5" stroke="#707070" stroke-width="1" />
<line x1="86" y1="337.5" x2="90" y2="337.5" stroke="#707070" stroke-width="1" />
<line x1="86" y1="355.5" x2="90" y2="355.5" stroke="#707070" stroke-width="1" />
<line x1="86" y1="373.5" x2="90" y2="373.5" stroke="#707070" stroke-width="1" />
<line x1="86" y1="409.5" x2="90" y2="409.5" stroke="#707070" stroke-width="1" />
<line x1="86" y1="427.5" x2="90" y2="427.5" stroke="#707070" stroke-width="1" />
<line x1="86" y1="445.5" x2="90" y2="445.5" stroke="#707070" stroke-width="1" />
<line x1="86" y1="463.5" x2="90" y2="463.5" stroke="#707070" stroke-width="1" />
<line x1="86" y1="499.5" x2="90" y2="499.5" stroke="#707070" stroke-width="1" />
<line x1="86" y1="517.5" x2="90" y2="517.5" stroke="#707070" stroke-width="1" />
<line x1="86" y1="535.5" x2="90" y2="535.5" stroke="#707070" stroke-width="1" />
<line x1="86" y1="553.5" x2="90" y2="553.5" stroke="#707070" stroke-width="1" />
<line x1="86" y1="589.5" x2="90" y2="589.5" stroke="#707070" stroke-width="1" />
<line x1="86" y1="607.5" x2="90" y2="607.5" stroke="#707070" stroke-width="1" />
<line x1="86" y1="625.5" x2="90" y2="625.5" stroke="#707070" stroke-width="1" />
<line x1="86" y1="643.5" x2="90" y2="643.5" stroke="#707070" stroke-width="1" />
<line x1="86" y1="679.5" x2="90" y2="679.5" stroke="#707070" stroke-width="1" />
<line x1="86" y1="697.5" x2="90" y2="697.5" stroke="#707070" stroke-width="1" />
<line x1="86" y1="715.5" x2="90" y2="715.5" stroke="#707070" stroke-width="1" />
<line x1="86" y1="733.5" x2="90" y2="733.5" stroke="#707070" stroke-width="1" />
<line x1="86" y1="769.5" x2="90" y2="769.5" stroke="#707070" stroke-width="1" />
<line x1="86" y1="787.5" x2="90" y2="787.5" stroke="#707070" stroke-width="1" />
<line x1="86" y1="805.5" x2="90" y2="805.5" stroke="#707070" stroke-width="1" />
<line x1="86" y1="823.5" x2="90" y2="823.5" stroke="#707070" stroke-width="1" />
<line x1="86" y1="859.5" x2="90" y2="859.5" stroke="#707070" stroke-width="1" />
<line x1="86" y1="877.5" x2="90" y2="877.5" stroke="#707070" stroke-width="1" />
<line x1="86" y1="895.5" x2="90" y2="895.5" stroke="#707070" stroke-width="1" />
<line x1="86" y1="913.5" x2="90" y2="913.5" stroke="#707070" stroke-width="1" />
<line x1="86" y1="949.5" x2="90" y2="949.5" stroke="#707070" stroke-width="1" />
<line x1="86" y1="967.5" x2="90" y2="967.5" stroke="#707070" stroke-width="1" />
<line x1="86" y1="985.5" x2="90" y2="985.5" stroke="#707070" stroke-width="1" />
<line x1="86" y1="1003.5" x2="90" y2="1003.5" stroke="#707070" stroke-width="1" />
<defs><pattern id="hatch" width="3.3" height="8" patternUnits="userSpaceOnUse" patternTransform="skewX(-24)"><rect x="0" y="0" width="1.75" height="8" fill="#fff"/></pattern></defs>
<rect x="556.8" y="283.3" width="586.6000000000001" height="7.0" fill="url(#hatch)"/>
<rect x="556.8" y="477" width="586.6000000000001" height="7.399999999999977" fill="url(#hatch)"/>
<rect x="556.8" y="910" width="586.6000000000001" height="7.2999999999999545" fill="url(#hatch)"/>
<path d="M622.70,625.20h20.52v2.98h-20.52zM646.16,625.20h14.66v2.98h-14.66zM663.75,625.20h5.86v2.98h-5.86zM675.48,625.20h20.52v2.98h-20.52zM622.70,628.13h2.93v2.98h-2.93zM640.29,628.13h2.93v2.98h-2.93zM646.16,628.13h8.80v2.98h-8.80zM657.88,628.13h5.86v2.98h-5.86zM666.68,628.13h5.86v2.98h-5.86zM675.48,628.13h2.93v2.98h-2.93zM693.07,628.13h2.93v2.98h-2.93zM622.70,631.06h2.93v2.98h-2.93zM628.56,631.06h8.80v2.98h-8.80zM640.29,631.06h2.93v2.98h-2.93zM654.95,631.06h2.93v2.98h-2.93zM666.68,631.06h2.93v2.98h-2.93zM675.48,631.06h2.93v2.98h-2.93zM681.34,631.06h8.80v2.98h-8.80zM693.07,631.06h2.93v2.98h-2.93zM622.70,634.00h2.93v2.98h-2.93zM628.56,634.00h8.80v2.98h-8.80zM640.29,634.00h2.93v2.98h-2.93zM649.09,634.00h8.80v2.98h-8.80zM660.82,634.00h5.86v2.98h-5.86zM675.48,634.00h2.93v2.98h-2.93zM681.34,634.00h8.80v2.98h-8.80zM693.07,634.00h2.93v2.98h-2.93zM622.70,636.93h2.93v2.98h-2.93zM628.56,636.93h8.80v2.98h-8.80zM640.29,636.93h2.93v2.98h-2.93zM646.16,636.93h2.93v2.98h-2.93zM666.68,636.93h2.93v2.98h-2.93zM675.48,636.93h2.93v2.98h-2.93zM681.34,636.93h8.80v2.98h-8.80zM693.07,636.93h2.93v2.98h-2.93zM622.70,639.86h2.93v2.98h-2.93zM640.29,639.86h2.93v2.98h-2.93zM646.16,639.86h5.86v2.98h-5.86zM657.88,639.86h14.66v2.98h-14.66zM675.48,639.86h2.93v2.98h-2.93zM693.07,639.86h2.93v2.98h-2.93zM622.70,642.79h20.52v2.98h-20.52zM657.88,642.79h8.80v2.98h-8.80zM675.48,642.79h20.52v2.98h-20.52zM652.02,645.72h2.93v2.98h-2.93zM663.75,645.72h8.80v2.98h-8.80zM622.70,648.66h2.93v2.98h-2.93zM637.36,648.66h5.86v2.98h-5.86zM646.16,648.66h2.93v2.98h-2.93zM654.95,648.66h5.86v2.98h-5.86zM666.68,648.66h8.80v2.98h-8.80zM681.34,648.66h2.93v2.98h-2.93zM693.07,648.66h2.93v2.98h-2.93zM625.63,651.59h5.86v2.98h-5.86zM643.22,651.59h2.93v2.98h-2.93zM652.02,651.59h11.73v2.98h-11.73zM666.68,651.59h8.80v2.98h-8.80zM678.41,651.59h5.86v2.98h-5.86zM690.14,651.59h2.93v2.98h-2.93zM631.50,654.52h11.73v2.98h-11.73zM646.16,654.52h5.86v2.98h-5.86zM657.88,654.52h2.93v2.98h-2.93zM669.61,654.52h2.93v2.98h-2.93zM675.48,654.52h5.86v2.98h-5.86zM622.70,657.45h2.93v2.98h-2.93zM637.36,657.45h2.93v2.98h-2.93zM643.22,657.45h2.93v2.98h-2.93zM657.88,657.45h2.93v2.98h-2.93zM669.61,657.45h17.59v2.98h-17.59zM622.70,660.38h2.93v2.98h-2.93zM631.50,660.38h2.93v2.98h-2.93zM640.29,660.38h2.93v2.98h-2.93zM646.16,660.38h5.86v2.98h-5.86zM657.88,660.38h5.86v2.98h-5.86zM666.68,660.38h8.80v2.98h-8.80zM678.41,660.38h2.93v2.98h-2.93zM684.27,660.38h8.80v2.98h-8.80zM625.63,663.32h2.93v2.98h-2.93zM637.36,663.32h8.80v2.98h-8.80zM649.09,663.32h8.80v2.98h-8.80zM663.75,663.32h5.86v2.98h-5.86zM678.41,663.32h5.86v2.98h-5.86zM687.20,663.32h5.86v2.98h-5.86zM628.56,666.25h2.93v2.98h-2.93zM634.43,666.25h2.93v2.98h-2.93zM640.29,666.25h5.86v2.98h-5.86zM652.02,666.25h5.86v2.98h-5.86zM660.82,666.25h20.52v2.98h-20.52zM684.27,666.25h2.93v2.98h-2.93zM690.14,666.25h5.86v2.98h-5.86zM622.70,669.18h8.80v2.98h-8.80zM637.36,669.18h5.86v2.98h-5.86zM646.16,669.18h2.93v2.98h-2.93zM652.02,669.18h5.86v2.98h-5.86zM660.82,669.18h2.93v2.98h-2.93zM672.54,669.18h2.93v2.98h-2.93zM684.27,669.18h11.73v2.98h-11.73zM622.70,672.11h2.93v2.98h-2.93zM628.56,672.11h8.80v2.98h-8.80zM646.16,672.11h20.52v2.98h-20.52zM669.61,672.11h26.39v2.98h-26.39zM646.16,675.04h8.80v2.98h-8.80zM669.61,675.04h2.93v2.98h-2.93zM681.34,675.04h2.93v2.98h-2.93zM690.14,675.04h2.93v2.98h-2.93zM622.70,677.98h20.52v2.98h-20.52zM663.75,677.98h8.80v2.98h-8.80zM675.48,677.98h2.93v2.98h-2.93zM681.34,677.98h2.93v2.98h-2.93zM693.07,677.98h2.93v2.98h-2.93zM622.70,680.91h2.93v2.98h-2.93zM640.29,680.91h2.93v2.98h-2.93zM646.16,680.91h8.80v2.98h-8.80zM657.88,680.91h2.93v2.98h-2.93zM666.68,680.91h5.86v2.98h-5.86zM681.34,680.91h2.93v2.98h-2.93zM687.20,680.91h8.80v2.98h-8.80zM622.70,683.84h2.93v2.98h-2.93zM628.56,683.84h8.80v2.98h-8.80zM640.29,683.84h2.93v2.98h-2.93zM649.09,683.84h2.93v2.98h-2.93zM654.95,683.84h8.80v2.98h-8.80zM666.68,683.84h17.59v2.98h-17.59zM687.20,683.84h8.80v2.98h-8.80zM622.70,686.77h2.93v2.98h-2.93zM628.56,686.77h8.80v2.98h-8.80zM640.29,686.77h2.93v2.98h-2.93zM654.95,686.77h2.93v2.98h-2.93zM660.82,686.77h26.39v2.98h-26.39zM690.14,686.77h2.93v2.98h-2.93zM622.70,689.70h2.93v2.98h-2.93zM628.56,689.70h8.80v2.98h-8.80zM640.29,689.70h2.93v2.98h-2.93zM652.02,689.70h14.66v2.98h-14.66zM669.61,689.70h2.93v2.98h-2.93zM675.48,689.70h5.86v2.98h-5.86zM684.27,689.70h5.86v2.98h-5.86zM622.70,692.64h2.93v2.98h-2.93zM640.29,692.64h2.93v2.98h-2.93zM646.16,692.64h2.93v2.98h-2.93zM654.95,692.64h5.86v2.98h-5.86zM663.75,692.64h11.73v2.98h-11.73zM681.34,692.64h2.93v2.98h-2.93zM687.20,692.64h2.93v2.98h-2.93zM693.07,692.64h2.93v2.98h-2.93zM622.70,695.57h20.52v2.98h-20.52zM646.16,695.57h23.46v2.98h-23.46zM678.41,695.57h5.86v2.98h-5.86zM687.20,695.57h8.80v2.98h-8.80z" fill="#fff" shape-rendering="crispEdges"/>
<path d="M768.7,387.2 V361.8 H779.4 A8.05,8.05 0 0 1 779.4,377.9 H768.7 M781.6,377.9 L788.6,387.2" fill="none" stroke="#ffffff" stroke-width="2.35" stroke-linejoin="miter"/>
<rect x="795.3" y="375.9" width="11.0" height="2.3000000000000114" fill="#ffffff" />
<path d="M827.7,365.7 C825.9,363.2 823,361.8 819.4,361.8 C814.8,361.8 811.6,364.3 811.6,367.9 C811.6,371.9 815,373.1 819.6,374.1 C824.6,375.2 828.4,376.6 828.4,380.6 C828.4,384 825,386 819.8,386 C815.6,386 812.2,384.4 810.4,381.7" fill="none" stroke="#15181e" stroke-width="2.35"/>
<ellipse cx="848.85" cy="373.9" rx="12.5" ry="12.1" fill="none" stroke="#15181e" stroke-width="2.35"/>
<path d="M848.6,383.2 C850.5,388 853.8,391.4 858,391.4 C860.6,391.4 862.6,390.2 864,388.3" fill="none" stroke="#15181e" stroke-width="2.35"/>
<path d="M871.5,360.6 V374.7 A11.3,11.3 0 0 0 894.1,374.7 V360.6" fill="none" stroke="#15181e" stroke-width="2.35"/>
<path d="M921.4,361.8 H904.2 V386 H922 M904.2,373.7 H919.6" fill="none" stroke="#15181e" stroke-width="2.35"/>
<path d="M930.9000000000001,387.2 V361.8 H941.5999999999999 A8.05,8.05 0 0 1 941.5999999999999,377.9 H930.9000000000001 M943.8,377.9 L950.8,387.2" fill="none" stroke="#15181e" stroke-width="2.35" stroke-linejoin="miter"/>
<path d="M977.4,361.8 H959.8000000000001 V386 H978.0 M959.8000000000001,373.7 H975.6" fill="none" stroke="#ffffff" stroke-width="2.35"/>
<path d="M724.7,373.1 L719.65,377.9 V387.1 H725.45 V378.4" fill="none" stroke="#ffffff" stroke-width="3.3" stroke-linejoin="miter"/>
<path d="M732.1,373.1 L737.15,377.9 V387.1 H731.35 V378.4" fill="none" stroke="#ffffff" stroke-width="3.3" stroke-linejoin="miter"/>
<path d="M728.4,363.5 L734.8,370.1 L728.4,376.3 L722,370.1 Z" fill="#ffffff" stroke="#15181e" stroke-width="1.7" paint-order="stroke fill"/>
<path d="M727,392.5 L724.6,392.2 C723,392.2 721.9,393.4 722,394.8 L727,400.4 Z M729.8,392.5 L732.2,392.2 C733.8,392.2 734.9,393.4 734.8,394.8 L729.8,400.4 Z" fill="#ffffff"/>
<line x1="781.3" y1="779" x2="781.3" y2="872" stroke="#8b8d90" stroke-width="1" stroke-dasharray="4.6 5.3"/>
<line x1="928" y1="780.4" x2="928" y2="872" stroke="#8b8d90" stroke-width="1" stroke-dasharray="4.2 6.1"/>
<path d="M731.6,787.4 L725.6,793 H727.4 V798 H730.4 V794.6 H732.8 V798 H735.8 V793 H737.6 L735.6,791.1 V788.4 H734.2 V789.8 Z" fill="#ffffff"/>
<path d="M848.6,786.8 C847.4,787 846.6,788 846.8,789.2 C847.4,794 851.6,798 856.4,798.6 C857.6,798.7 858.4,797.8 858.4,796.8 L858.2,795.6 L855.2,794.2 L853.8,795.6 C852,794.8 850.6,793.4 849.8,791.6 L851.2,790.2 L849.8,787 Z" fill="#ffffff"/>
<path d="M988.4,787.8 L977,792.4 L982.6,793.8 L984.4,798.6 Z" fill="#ffffff"/>
<path d="M9,68.4 L6.6,70.7 L9,73 M12.8,68.4 L10.4,70.7 L12.8,73" fill="none" stroke="#dcdcdc" stroke-width="1.5"/>
<rect x="26" y="80.2" width="1" height="3.799999999999997" fill="#3a3a3a" />
<rect x="28" y="80.2" width="1" height="3.799999999999997" fill="#3a3a3a" />
<rect x="30" y="80.2" width="1" height="3.799999999999997" fill="#3a3a3a" />
<rect x="32" y="80.2" width="1" height="3.799999999999997" fill="#3a3a3a" />
<rect x="34" y="80.2" width="1" height="3.799999999999997" fill="#3a3a3a" />
<rect x="36" y="80.2" width="1" height="3.799999999999997" fill="#3a3a3a" />
<rect x="38" y="80.2" width="1" height="3.799999999999997" fill="#3a3a3a" />
<rect x="40" y="80.2" width="1" height="3.799999999999997" fill="#3a3a3a" />
<rect x="42" y="80.2" width="1" height="3.799999999999997" fill="#3a3a3a" />
<rect x="44" y="80.2" width="1" height="3.799999999999997" fill="#3a3a3a" />
<path d="M16.2,100.8 L27.2,111.3 L20.8,111.7 L16.2,116.2 Z" fill="none" stroke="#c4c4c4" stroke-width="1.15" stroke-linejoin="miter"/>
<path d="M45.8,100 L57.8,111.6 L50.9,112 L45.8,117.1 Z" fill="#c4c4c4"/>
<path d="M64.3,118 L60.9,118 L64.3,114.6 Z" fill="#c4c4c4"/>
<path d="M13.3,140.2 L24.4,129.6" stroke="#c4c4c4" stroke-width="2.1"/>
<path d="M18,124.7 L19.188,126.812 L21.3,128 L19.188,129.188 L18,131.3 L16.812,129.188 L14.7,128 L16.812,126.812 Z" fill="#c4c4c4"/>
<path d="M26.2,123.5 L27.172,125.22800000000001 L28.9,126.2 L27.172,127.172 L26.2,128.9 L25.227999999999998,127.172 L23.5,126.2 L25.227999999999998,125.22800000000001 Z" fill="#c4c4c4"/>
<path d="M27.3,130.1 L28.056,131.444 L29.400000000000002,132.2 L28.056,132.956 L27.3,134.29999999999998 L26.544,132.956 L25.2,132.2 L26.544,131.444 Z" fill="#c4c4c4"/>
<path d="M51.1,124.6 C46.4,124.6 43,126.8 43,129.8 C43,132 44.6,133.6 46.6,134.2 M59.2,130.4 C59.4,127 55.8,124.6 51.1,124.6" fill="none" stroke="#c4c4c4" stroke-width="1.1"/>
<circle cx="47.2" cy="133.6" r="1.7" fill="none" stroke="#c4c4c4" stroke-width="1"/><path d="M48.4,135 C49.2,137.2 48.4,139.2 45.8,139.6" fill="none" stroke="#c4c4c4" stroke-width="1"/>
<path d="M50.9,127.1 L61.1,136.5 L55.2,137.3 L50.9,140.9 Z" fill="#c4c4c4"/>
<g transform="translate(0,0)"><path d="M12.9,163.7 L15.6,154.4 Q16.2,152.7 17.9,152 L20.7,150.9 L25.9,156.4 L25.2,158.8 Q24.6,160.3 23.2,160.9 L14.3,164.3 Z" fill="#c4c4c4"/><path d="M21.5,150.2 L23.9,147.9 L29.2,152.9 L26.7,155.7 Z" fill="#c4c4c4"/><path d="M13.6,163.2 L18.7,158.2" stroke="#535353" stroke-width="0.9" stroke-dasharray="1.2 .5"/></g>
<path d="M34.2,166 L30.800000000000004,166 L34.2,162.6 Z" fill="#c4c4c4"/>
<g transform="translate(32.3,0)"><path d="M12.9,163.7 L15.6,154.4 Q16.2,152.7 17.9,152 L20.7,150.9 L25.9,156.4 L25.2,158.8 Q24.6,160.3 23.2,160.9 L14.3,164.3 Z" fill="#c4c4c4"/><path d="M21.5,150.2 L23.9,147.9 L29.2,152.9 L26.7,155.7 Z" fill="#c4c4c4"/><path d="M13.6,163.2 L18.7,158.2" stroke="#535353" stroke-width="0.9" stroke-dasharray="1.2 .5"/></g>
<path d="M41.9,149.2 C44.6,151 45,152.6 44.2,154.6 C43,157.4 41.2,159 41.6,161.2 C41.9,162.8 43.4,163.4 44.8,163.6" fill="none" stroke="#c4c4c4" stroke-width="1.1"/>
<path d="M13.9,173.2 H27.8 V176.6 H26.6 L26,175 H22.3 V185.4 L24.3,185.8 V187 H17.7 V185.8 L19.6,185.4 V175 H15.7 L15.1,176.6 H13.9 Z" fill="#ebebeb"/>
<path d="M34.2,190 L30.8,190 L34.2,186.6 Z" fill="#ebebeb"/>
<line x1="43.6" y1="186.9" x2="58.3" y2="172.8" stroke="#c4c4c4" stroke-width="1.5" />
<path d="M64.3,190 L60.9,190 L64.3,186.6 Z" fill="#c4c4c4"/>
<rect x="13.4" y="197.4" width="15.4" height="13.2" fill="#707070" stroke="#c4c4c4" stroke-width="1"/>
<path d="M34.2,214 L30.800000000000004,214 L34.2,210.6 Z" fill="#c4c4c4"/>
<path d="M58.9,195.8 C59.6,196.2 59.6,197.4 59,198.4 L52.2,207 L49.8,205.2 L56.6,196.6 C57.4,195.8 58.2,195.5 58.9,195.8 Z" fill="#c4c4c4"/><path d="M49,206 L51.4,207.8 C51,210.4 48,211.9 43,211.8 C45.4,210.6 45.4,206.6 49,206 Z" fill="#c4c4c4"/>
<path d="M64.3,214 L60.9,214 L64.3,210.6 Z" fill="#c4c4c4"/>
<path d="M22.4,224 A6.3,6.3 0 1 0 17.4,233.6" fill="none" stroke="#c4c4c4" stroke-width="1.1"/><path d="M22.6,225.2 A6.3,6.3 0 0 0 12.4,231 L18,232.6 Z" fill="#707070"/>
<path d="M29.9,222 L32.2,224.4 L20.6,235.4 L17.6,236.2 L18.2,233.2 Z" fill="#c4c4c4"/>
<path d="M34.2,238 L30.800000000000004,238 L34.2,234.6 Z" fill="#c4c4c4"/>
<path d="M52.4,219.4 L59.8,226.6 L51.6,234 L44.6,227 Z" fill="#c4c4c4"/><path d="M44.4,227.4 L51.2,234.4 L49,236 C48.2,236.4 47.4,236.2 46.8,235.6 L43,231.6 C42.4,230.8 42.4,229.8 43,229.2 Z" fill="none" stroke="#c4c4c4" stroke-width="1.1"/>
<path d="M64.3,238 L60.9,238 L64.3,234.6 Z" fill="#c4c4c4"/>
<path d="M15.6,246.8 A7.7,7.7 0 0 1 28.4,253.2" fill="none" stroke="#c4c4c4" stroke-width="1.5"/><path d="M13.2,243.8 L13.8,250.2 L19.4,248.4 Z" fill="#c4c4c4"/><path d="M28.2,254.8 A7.7,7.7 0 0 1 13.4,254.2" fill="none" stroke="#c4c4c4" stroke-width="1.3" stroke-dasharray="1.2 1.7"/>
<path d="M34.2,262 L30.800000000000004,262 L34.2,258.6 Z" fill="#c4c4c4"/>
<rect x="46.6" y="244.7" width="12.9" height="10.7" fill="none" stroke="#c4c4c4" stroke-width="1"/><rect x="42.4" y="251.6" width="8.8" height="7.6" fill="none" stroke="#c4c4c4" stroke-width="1"/><path d="M53.2,250.6 L57.4,246.8 M54.6,246.6 H57.7 V249.6" fill="none" stroke="#c4c4c4" stroke-width="1"/>
<path d="M64.3,262 L60.9,262 L64.3,258.6 Z" fill="#c4c4c4"/>
<path d="M14.4,271.4 C16.2,268.6 19.6,269.6 18.8,272.8 C18.2,275.4 16.4,277.2 16.8,279.6 C19.8,281.2 23.4,279.8 25.6,276.8 C27.4,274.4 29.8,273.8 30.4,276.4 L30.2,278.4 C29,276.6 27.8,277.4 26.6,279.2 C24,282.6 19,283.6 15,281.4 L13.4,281.6 C13.6,277.8 16.2,275 16.6,272.6 C16.8,271.4 15.6,271.2 14.4,271.4 Z" fill="#c4c4c4"/><circle cx="18" cy="277.2" r="1.7" fill="#535353" stroke="#c4c4c4" stroke-width=".9"/><circle cx="23.6" cy="271.8" r="1.4" fill="#535353" stroke="#c4c4c4" stroke-width=".9"/><path d="M14,281 L22.8,272.6" stroke="#c4c4c4" stroke-width=".9"/><rect x="12.2" y="280.2" width="2.6" height="2.6" fill="#535353" stroke="#c4c4c4" stroke-width=".9"/>
<path d="M34.2,286 L30.800000000000004,286 L34.2,282.6 Z" fill="#c4c4c4"/>
<rect x="48.2" y="270" width="12" height="11.8" fill="none" stroke="#c4c4c4" stroke-width="1.1"/>
<rect x="46.900000000000006" y="268.7" width="2.5999999999999943" height="2.6000000000000227" fill="#c4c4c4" />
<rect x="52.900000000000006" y="268.7" width="2.5999999999999943" height="2.6000000000000227" fill="#c4c4c4" />
<rect x="58.900000000000006" y="268.7" width="2.5999999999999943" height="2.6000000000000227" fill="#c4c4c4" />
<rect x="58.900000000000006" y="274.7" width="2.5999999999999943" height="2.6000000000000227" fill="#c4c4c4" />
<rect x="46.900000000000006" y="280.5" width="2.5999999999999943" height="2.6000000000000227" fill="#c4c4c4" />
<rect x="52.900000000000006" y="280.5" width="2.5999999999999943" height="2.6000000000000227" fill="#c4c4c4" />
<rect x="58.900000000000006" y="280.5" width="2.5999999999999943" height="2.6000000000000227" fill="#c4c4c4" />
<path d="M42,267.4 L51.6,276.2 L46.4,277 L42,281.2 Z" fill="#c4c4c4" stroke="#535353" stroke-width=".6"/>
<path d="M64.3,286 L60.9,286 L64.3,282.6 Z" fill="#c4c4c4"/>
<ellipse cx="17.4" cy="298.6" rx="5.2" ry="5" fill="none" stroke="#c4c4c4" stroke-width="1"/><ellipse cx="22" cy="298.4" rx="5.8" ry="6.2" fill="none" stroke="#c4c4c4" stroke-width="1"/><path d="M14.4,298.6 H24" stroke="#c4c4c4" stroke-width="1.1" stroke-dasharray="1 1.1"/><path d="M24.2,297.4 L32,304.6 L27.6,305.2 L24.2,308.4 Z" fill="#c4c4c4" stroke="#535353" stroke-width=".7"/>
<path d="M34.2,310 L30.800000000000004,310 L34.2,306.6 Z" fill="#c4c4c4"/>
<path d="M42.4,292.2 L52.8,295.6 V301.4 L42.4,308 Z M42.4,297.6 L52.8,298.6 M42.4,302.8 L52.8,300.2 M46.2,293.4 V305.6 M49.8,294.6 V303.4" fill="none" stroke="#c4c4c4" stroke-width="1"/><path d="M52.6,301 H56 L57,302.4 H51 Z" fill="#8a8a8a"/><path d="M48.6,304.7 H58.6 M44,307.9 H60.4" stroke="#a8a8a8" stroke-width="1"/>
<path d="M64.3,310 L60.9,310 L64.3,306.6 Z" fill="#c4c4c4"/>
<rect x="13.4" y="317.7" width="15.4" height="13" fill="none" stroke="#c4c4c4" stroke-width="1"/><path d="M13.4,322.4 C17,320.6 19,319.4 20.2,317.8 M13.4,327.2 C19,325 23.4,321.4 24.6,317.8 M16,330.6 C17.4,326 20.4,322 21.4,320.4 M20.4,330.6 C23.6,327.8 25.6,323 25.2,319.6 M18.2,321.8 C20.6,323 23.4,324.8 28.6,325.6 M16.4,326.4 C19,327.2 22,328.2 24.6,330.6" fill="none" stroke="#c4c4c4" stroke-width=".9"/>
<defs><linearGradient id="gr1" x1="0" x2="1" y1="0" y2="0"><stop offset="0" stop-color="#1e1e1e"/><stop offset="1" stop-color="#e4e4e4"/></linearGradient></defs>
<rect x="43.4" y="317.7" width="15.6" height="13" fill="url(#gr1)" stroke="#c4c4c4" stroke-width="1"/>
<path d="M25,340.8 C26.4,339.6 28,340.2 28.4,341.4 C28.8,342.6 28.2,343.6 27.2,344.4 L26.2,345.4 L26.8,346.2 L25.6,347.4 L21.4,343.2 L22.6,342 L23.4,342.6 Z" fill="#c4c4c4"/><path d="M22.6,345 L14.6,353 C13.8,353.8 13,355.4 13.4,355.8 C13.8,356.2 15.2,355.6 16.2,354.6 L24.2,346.6" fill="none" stroke="#c4c4c4" stroke-width="1"/>
<path d="M34.2,358 L30.800000000000004,358 L34.2,354.6 Z" fill="#c4c4c4"/>
<rect x="42" y="341" width="8" height="8" fill="#c4c4c4"/><circle cx="50.6" cy="347.8" r="4" fill="#8c8c8c" stroke="#c4c4c4" stroke-width="1"/><circle cx="56" cy="350.8" r="3.8" fill="#535353" stroke="#c4c4c4" stroke-width="1.1"/>
<rect x="20.4" y="368" width="9.4" height="11.6" fill="none" stroke="#c4c4c4" stroke-width="1.1"/><rect x="22.8" y="364.4" width="4.6" height="3.6" fill="#c4c4c4"/><circle cx="25.1" cy="373.8" r="2.1" fill="none" stroke="#c4c4c4" stroke-width="1.6"/>
<rect x="12.2" y="365" width="1.8000000000000007" height="1.8000000000000114" fill="#a0a0a0" />
<rect x="15.2" y="365" width="1.8000000000000007" height="1.8000000000000114" fill="#a0a0a0" />
<rect x="18.2" y="365" width="1.8000000000000007" height="1.8000000000000114" fill="#a0a0a0" />
<rect x="12.2" y="368" width="1.8000000000000007" height="1.8000000000000114" fill="#a0a0a0" />
<rect x="15.2" y="368" width="1.8000000000000007" height="1.8000000000000114" fill="#a0a0a0" />
<rect x="12.2" y="371" width="1.8000000000000007" height="1.8000000000000114" fill="#a0a0a0" />
<path d="M34.2,382 L30.800000000000004,382 L34.2,378.6 Z" fill="#c4c4c4"/>
<path d="M42.4,364.2 V378.6 H60" fill="none" stroke="#c4c4c4" stroke-width="1"/>
<rect x="46" y="370.8" width="3" height="7.199999999999989" fill="#c4c4c4" />
<rect x="51.2" y="365.2" width="3.0" height="12.800000000000011" fill="#c4c4c4" />
<rect x="56.1" y="367" width="3.1000000000000014" height="11" fill="#c4c4c4" />
<path d="M64.3,382 L60.9,382 L64.3,378.6 Z" fill="#c4c4c4"/>
<path d="M16.4,392.8 H24.6 L27.8,396 V402.8 H16.4 Z" fill="#707070" stroke="#c4c4c4" stroke-width="1"/><path d="M24.4,392.8 V396.2 H27.8" fill="none" stroke="#c4c4c4" stroke-width=".9"/>
<line x1="11" y1="392.4" x2="15" y2="392.4" stroke="#c4c4c4" stroke-width="1" />
<line x1="16.4" y1="387" x2="16.4" y2="391.4" stroke="#c4c4c4" stroke-width="1" />
<path d="M55.4,387.8 L59.4,391.6 L57.4,394 L53.2,390.2 Z" fill="#c4c4c4"/><path d="M52.8,391 L56.6,394.6 L42.2,404.2 Z" fill="none" stroke="#c4c4c4" stroke-width="1"/><path d="M55.6,394.8 L42.2,404.2 L50,398.2" fill="#c4c4c4"/>
<path d="M64.3,406 L60.9,406 L64.3,402.6 Z" fill="#c4c4c4"/>
<path d="M19.4,427.8 C17.4,426.4 15.4,423.6 13,420.6 C12.6,419.6 13.8,419 14.8,419.6 L17.4,422.2 L16.2,414.8 C16.2,413.6 17.8,413.4 18.2,414.6 L19.6,420 L19.8,413 C20,411.8 21.8,411.8 22,413 L22.4,419.8 L23.8,413.8 C24.2,412.8 25.8,413 25.8,414.2 L25,420.6 L26.6,416.6 C27.2,415.8 28.6,416.2 28.2,417.4 C27.2,421 26.8,424.6 24.8,427.8 Z" fill="#c4c4c4"/>
<path d="M34.2,430 L30.800000000000004,430 L34.2,426.6 Z" fill="#c4c4c4"/>
<circle cx="49" cy="417.6" r="5.6" fill="none" stroke="#c4c4c4" stroke-width="1.2"/><path d="M53.2,421.8 L58.4,427.4" stroke="#c4c4c4" stroke-width="2.1"/>
<line x1="6" y1="434.6" x2="66" y2="434.6" stroke="#606060" stroke-width="1" />
<line x1="25.2" y1="491.2" x2="58.8" y2="458.4" stroke="#f1131d" stroke-width="2" />
<path d="M52.4,445.6 C53.4,442.4 57.4,441.6 58.6,445 L58.8,447.6" fill="none" stroke="#c4c4c4" stroke-width="1.9"/><path d="M50.6,444.8 L54.6,440.2 L55.4,446.2 Z" fill="#c4c4c4"/><path d="M55.8,447.2 H61.8 L58.8,451.4 Z" fill="#c4c4c4"/>
<rect x="10.6" y="484.2" width="7" height="7" fill="#535353" stroke="#0c0c0c" stroke-width="1.6"/><rect x="6.6" y="480.6" width="6.8" height="6.8" fill="#fff" stroke="#0c0c0c" stroke-width="1.2"/>
<rect x="9.4" y="503.8" width="12" height="11.6" fill="#fff" stroke="#111" stroke-width="1"/>
<defs><linearGradient id="gr2" x1="0" x2="1" y1="0" y2="0"><stop offset="0" stop-color="#f4f4f4"/><stop offset="1" stop-color="#222"/></linearGradient></defs>
<rect x="29.4" y="503.8" width="12" height="11.6" fill="url(#gr2)" stroke="#111" stroke-width="1"/>
<rect x="49.4" y="503.8" width="12" height="11.6" fill="#fff" stroke="#111" stroke-width="1"/><path d="M50,514.8 L60.8,504.4" stroke="#f1131d" stroke-width="2.2"/>
<circle cx="15" cy="532.2" r="4.2" fill="#9a9a9a" stroke="#c4c4c4" stroke-width="1"/><rect x="15.6" y="533" width="5.6" height="5.2" fill="#c4c4c4"/>
<rect x="35.6" y="533" width="5.6" height="5.2" fill="#c4c4c4"/><circle cx="35" cy="532.2" r="4.2" fill="#535353" stroke="#c4c4c4" stroke-width="1"/>
<circle cx="55" cy="532.6" r="4.2" fill="none" stroke="#a0a0a0" stroke-width="1"/><path d="M55,532.6 V528.4 A4.2,4.2 0 0 1 59.2,532.6 Z" fill="#c4c4c4"/>
<rect x="33.6" y="551.8" width="13.4" height="9.6" fill="#6c6c6c" stroke="#c4c4c4" stroke-width="1"/><rect x="24.8" y="556.4" width="13.4" height="9.8" fill="#6c6c6c" stroke="#c4c4c4" stroke-width="1"/>
<circle cx="30.6" cy="591.2" r="1.5" fill="#c4c4c4"/>
<circle cx="36.2" cy="591.2" r="1.5" fill="#c4c4c4"/>
<circle cx="41.8" cy="591.2" r="1.5" fill="#c4c4c4"/>
<path d="M1614.4,105.2 L1618.4,101.2 L1622.4,105.2" fill="none" stroke="#9a9a9a" stroke-width="1.4"/>
<path d="M1614.4,1022.4000000000001 L1618.4,1026.4 L1622.4,1022.4000000000001" fill="none" stroke="#9a9a9a" stroke-width="1.4"/>
<path d="M1655.4,68.4 L1653,70.7 L1655.4,73 M1659.2,68.4 L1656.8,70.7 L1659.2,73" fill="none" stroke="#dcdcdc" stroke-width="1.5"/>
<path d="M1906.6,68.4 L1909,70.7 L1906.6,73 M1910.4,68.4 L1912.8,70.7 L1910.4,73" fill="none" stroke="#dcdcdc" stroke-width="1.5"/>
<rect x="1638" y="80.2" width="1" height="3.799999999999997" fill="#3a3a3a" />
<rect x="1640" y="80.2" width="1" height="3.799999999999997" fill="#3a3a3a" />
<rect x="1642" y="80.2" width="1" height="3.799999999999997" fill="#3a3a3a" />
<rect x="1644" y="80.2" width="1" height="3.799999999999997" fill="#3a3a3a" />
<rect x="1646" y="80.2" width="1" height="3.799999999999997" fill="#3a3a3a" />
<rect x="1648" y="80.2" width="1" height="3.799999999999997" fill="#3a3a3a" />
<rect x="1650" y="80.2" width="1" height="3.799999999999997" fill="#3a3a3a" />
<rect x="1652" y="80.2" width="1" height="3.799999999999997" fill="#3a3a3a" />
<rect x="1654" y="80.2" width="1" height="3.799999999999997" fill="#3a3a3a" />
<rect x="1656" y="80.2" width="1" height="3.799999999999997" fill="#3a3a3a" />
<rect x="1638" y="149" width="1" height="3.8000000000000114" fill="#3a3a3a" />
<rect x="1640" y="149" width="1" height="3.8000000000000114" fill="#3a3a3a" />
<rect x="1642" y="149" width="1" height="3.8000000000000114" fill="#3a3a3a" />
<rect x="1644" y="149" width="1" height="3.8000000000000114" fill="#3a3a3a" />
<rect x="1646" y="149" width="1" height="3.8000000000000114" fill="#3a3a3a" />
<rect x="1648" y="149" width="1" height="3.8000000000000114" fill="#3a3a3a" />
<rect x="1650" y="149" width="1" height="3.8000000000000114" fill="#3a3a3a" />
<rect x="1652" y="149" width="1" height="3.8000000000000114" fill="#3a3a3a" />
<rect x="1654" y="149" width="1" height="3.8000000000000114" fill="#3a3a3a" />
<rect x="1656" y="149" width="1" height="3.8000000000000114" fill="#3a3a3a" />
<rect x="1638" y="246.2" width="1" height="3.8000000000000114" fill="#3a3a3a" />
<rect x="1640" y="246.2" width="1" height="3.8000000000000114" fill="#3a3a3a" />
<rect x="1642" y="246.2" width="1" height="3.8000000000000114" fill="#3a3a3a" />
<rect x="1644" y="246.2" width="1" height="3.8000000000000114" fill="#3a3a3a" />
<rect x="1646" y="246.2" width="1" height="3.8000000000000114" fill="#3a3a3a" />
<rect x="1648" y="246.2" width="1" height="3.8000000000000114" fill="#3a3a3a" />
<rect x="1650" y="246.2" width="1" height="3.8000000000000114" fill="#3a3a3a" />
<rect x="1652" y="246.2" width="1" height="3.8000000000000114" fill="#3a3a3a" />
<rect x="1654" y="246.2" width="1" height="3.8000000000000114" fill="#3a3a3a" />
<rect x="1656" y="246.2" width="1" height="3.8000000000000114" fill="#3a3a3a" />
<rect x="1638" y="343.6" width="1" height="3.8000000000000114" fill="#3a3a3a" />
<rect x="1640" y="343.6" width="1" height="3.8000000000000114" fill="#3a3a3a" />
<rect x="1642" y="343.6" width="1" height="3.8000000000000114" fill="#3a3a3a" />
<rect x="1644" y="343.6" width="1" height="3.8000000000000114" fill="#3a3a3a" />
<rect x="1646" y="343.6" width="1" height="3.8000000000000114" fill="#3a3a3a" />
<rect x="1648" y="343.6" width="1" height="3.8000000000000114" fill="#3a3a3a" />
<rect x="1650" y="343.6" width="1" height="3.8000000000000114" fill="#3a3a3a" />
<rect x="1652" y="343.6" width="1" height="3.8000000000000114" fill="#3a3a3a" />
<rect x="1654" y="343.6" width="1" height="3.8000000000000114" fill="#3a3a3a" />
<rect x="1656" y="343.6" width="1" height="3.8000000000000114" fill="#3a3a3a" />
<rect x="1638" y="412.2" width="1" height="3.8000000000000114" fill="#3a3a3a" />
<rect x="1640" y="412.2" width="1" height="3.8000000000000114" fill="#3a3a3a" />
<rect x="1642" y="412.2" width="1" height="3.8000000000000114" fill="#3a3a3a" />
<rect x="1644" y="412.2" width="1" height="3.8000000000000114" fill="#3a3a3a" />
<rect x="1646" y="412.2" width="1" height="3.8000000000000114" fill="#3a3a3a" />
<rect x="1648" y="412.2" width="1" height="3.8000000000000114" fill="#3a3a3a" />
<rect x="1650" y="412.2" width="1" height="3.8000000000000114" fill="#3a3a3a" />
<rect x="1652" y="412.2" width="1" height="3.8000000000000114" fill="#3a3a3a" />
<rect x="1654" y="412.2" width="1" height="3.8000000000000114" fill="#3a3a3a" />
<rect x="1656" y="412.2" width="1" height="3.8000000000000114" fill="#3a3a3a" />
<rect x="1638" y="509.4" width="1" height="3.7999999999999545" fill="#3a3a3a" />
<rect x="1640" y="509.4" width="1" height="3.7999999999999545" fill="#3a3a3a" />
<rect x="1642" y="509.4" width="1" height="3.7999999999999545" fill="#3a3a3a" />
<rect x="1644" y="509.4" width="1" height="3.7999999999999545" fill="#3a3a3a" />
<rect x="1646" y="509.4" width="1" height="3.7999999999999545" fill="#3a3a3a" />
<rect x="1648" y="509.4" width="1" height="3.7999999999999545" fill="#3a3a3a" />
<rect x="1650" y="509.4" width="1" height="3.7999999999999545" fill="#3a3a3a" />
<rect x="1652" y="509.4" width="1" height="3.7999999999999545" fill="#3a3a3a" />
<rect x="1654" y="509.4" width="1" height="3.7999999999999545" fill="#3a3a3a" />
<rect x="1656" y="509.4" width="1" height="3.7999999999999545" fill="#3a3a3a" />
<path d="M1648.6,93.2 C1654.2,93 1658,96 1657.8,100 C1657.6,104.6 1652.6,107.2 1647.2,107 C1642.4,106.8 1639,104.4 1639.2,101.4 C1639.4,98.6 1643.2,98.8 1644.6,97.4 C1645.8,96 1645,93.4 1648.6,93.2 Z" fill="#c8c8c8"/>
<circle cx="1643.4" cy="102.2" r="1.4" fill="#6a6a6a"/>
<circle cx="1647.6" cy="103.8" r="1.4" fill="#6a6a6a"/>
<circle cx="1652" cy="103.2" r="1.4" fill="#6a6a6a"/>
<circle cx="1654.8" cy="100.6" r="1.2" fill="#6a6a6a"/>
<circle cx="1654.2" cy="97.2" r="1.2" fill="#6a6a6a"/>
<defs><linearGradient id="cg" x1="0" x2="1" y1="0" y2="1"><stop offset="0" stop-color="#111"/><stop offset=".5" stop-color="#777"/><stop offset="1" stop-color="#f4f4f4"/></linearGradient></defs>
<path d="M1641.4,121 C1649.6,122 1655.6,128 1656.8,135.8 H1641.4 Z" fill="url(#cg)" stroke="#c8c8c8" stroke-width="1"/>
<rect x="1639.8" y="164" width="16.600000000000136" height="11.199999999999989" fill="#c8c8c8" />
<rect x="1641.2" y="165.4" width="3.599999999999909" height="3.4000000000000057" fill="#7a7a7a" />
<rect x="1646.1000000000001" y="165.4" width="3.599999999999909" height="3.4000000000000057" fill="#7a7a7a" />
<rect x="1651.0" y="165.4" width="3.599999999999909" height="3.4000000000000057" fill="#7a7a7a" />
<rect x="1641.2" y="170.0" width="3.599999999999909" height="3.4000000000000057" fill="#7a7a7a" />
<rect x="1646.1000000000001" y="170.0" width="3.599999999999909" height="3.4000000000000057" fill="#7a7a7a" />
<rect x="1651.0" y="170.0" width="3.599999999999909" height="3.4000000000000057" fill="#7a7a7a" />
<path d="M1644,197 H1652.4 V205.6 H1644 Z" fill="#c8c8c8"/><path d="M1646,196.6 L1645.4,190.6 C1645.6,188.6 1647.4,188.6 1647.6,190.6 L1647.6,196.6 Z M1649,196.6 L1649.2,189 C1649.6,187 1651.4,187.4 1651.2,189.4 L1650.6,196.6 Z M1644.6,196.6 L1642,192 C1641.4,190.4 1642.8,189.8 1643.6,191 L1645.6,196 Z M1651.4,196.6 L1653.4,192 C1654.2,190.6 1655.8,191.2 1655.2,192.8 L1652.6,196.8 Z" fill="#c8c8c8"/>
<circle cx="1648" cy="220.4" r="4" fill="#c8c8c8"/><circle cx="1643.8" cy="226" r="4" fill="#c8c8c8"/><circle cx="1652.2" cy="226" r="4" fill="#c8c8c8"/><path d="M1647,225 H1649 L1649.6,231.4 L1652,233.6 H1644 L1646.4,231.4 Z" fill="#c8c8c8"/>
<rect x="1640" y="260.4" width="16.40000000000009" height="1.2000000000000455" fill="#c8c8c8" />
<rect x="1640" y="264.4" width="16.40000000000009" height="2.2000000000000455" fill="#c8c8c8" />
<rect x="1640" y="269" width="16.40000000000009" height="3.1999999999999886" fill="#c8c8c8" />
<defs><linearGradient id="gr3" x1="0" x2="1" y1="0" y2="0"><stop offset="0" stop-color="#222"/><stop offset="1" stop-color="#e8e8e8"/></linearGradient></defs><rect x="1640.4" y="288.4" width="16" height="11.4" fill="url(#gr3)" stroke="#c8c8c8" stroke-width="1"/>
<circle cx="1645.4" cy="320.6" r="6.2" fill="#b4b4b4"/><circle cx="1650.6" cy="325.4" r="6.2" fill="#8e8e8e" stroke="#c8c8c8" stroke-width="1"/>
<circle cx="1648.4" cy="363.6" r="6" fill="#c8c8c8"/><circle cx="1648.4" cy="363.6" r="8.2" fill="none" stroke="#c8c8c8" stroke-width="1" stroke-dasharray="1.8 1.4"/>
<rect x="1643.6" y="384.4" width="13" height="13" fill="#535353" stroke="#c8c8c8" stroke-width="1.1"/><rect x="1642.4" y="394" width="6" height="6" fill="#535353" stroke="#c8c8c8" stroke-width="1.1"/><rect x="1640.4" y="391.6" width="5.6" height="5.6" fill="#535353" stroke="#c8c8c8" stroke-width="1.1"/>
<path d="M1648.4,424.2 L1656.8,429.6 L1648.4,435 L1640,429.6 Z" fill="#c8c8c8"/><path d="M1640,433.4 L1642.6,431.8 L1648.4,435.6 L1654.2,431.8 L1656.8,433.4 L1648.4,439.6 Z" fill="#c8c8c8"/>
<path d="M1647.4,455 H1640.8 V468.2 H1654.6 V461.6" fill="none" stroke="#c8c8c8" stroke-width="1.9"/><path d="M1650.4,458.4 L1656,452.8 M1650.6,452.2 H1656.6 V458.2" fill="none" stroke="#c8c8c8" stroke-width="1.9"/>
<rect x="1640.2" y="479.6" width="9.6" height="10" fill="#535353" stroke="#c8c8c8" stroke-width="1"/><rect x="1644.6" y="485.4" width="11.8" height="11" fill="#535353" stroke="#c8c8c8" stroke-width="1"/>
<path d="M1642.4,521.2 H1654.4 Q1656.8,521.2 1656.8,523.6 V530.4 Q1656.8,532.6 1654.4,532.6 H1648.4 L1643.6,537.8 V532.6 H1642.4 Q1640,532.6 1640,530.4 V523.6 Q1640,521.2 1642.4,521.2 Z" fill="#c8c8c8"/>
<rect x="1681.4" y="184.4" width="14.4" height="14.2" fill="none" stroke="#c8c8c8" stroke-width=".9"/>
<rect x="1679.5" y="182.5" width="3.8" height="3.8" fill="#535353" stroke="#c8c8c8" stroke-width=".95"/>
<rect x="1686.7" y="182.5" width="3.8" height="3.8" fill="#535353" stroke="#c8c8c8" stroke-width=".95"/>
<rect x="1693.9" y="182.5" width="3.8" height="3.8" fill="#535353" stroke="#c8c8c8" stroke-width=".95"/>
<rect x="1679.5" y="189.6" width="3.8" height="3.8" fill="#535353" stroke="#c8c8c8" stroke-width=".95"/>
<rect x="1686.3000000000002" y="189.2" width="4.599999999999909" height="4.600000000000023" fill="#fff" />
<rect x="1693.9" y="189.6" width="3.8" height="3.8" fill="#535353" stroke="#c8c8c8" stroke-width=".95"/>
<rect x="1679.5" y="196.7" width="3.8" height="3.8" fill="#535353" stroke="#c8c8c8" stroke-width=".95"/>
<rect x="1686.7" y="196.7" width="3.8" height="3.8" fill="#535353" stroke="#c8c8c8" stroke-width=".95"/>
<rect x="1693.9" y="196.7" width="3.8" height="3.8" fill="#535353" stroke="#c8c8c8" stroke-width=".95"/>
<path d="M1887.7,190.4 V188.3 A2.85,2.85 0 0 1 1893.4,188.3 V191.5 A2.85,2.85 0 0 1 1890.6,194.3 M1893.4,193.5 V196 A2.85,2.85 0 0 1 1887.7,196 V192.8 A2.85,2.85 0 0 1 1890.5,190" fill="none" stroke="#f6f6f6" stroke-width="1.7"/>
<path d="M1715,224.4 L1704.6,231.8 H1716.4 M1711.8,226.8 A5,5 0 0 1 1713.8,231.6" fill="none" stroke="#c8c8c8" stroke-width="1.1"/>
<rect x="1718.2" y="226.6" width="1.2000000000000455" height="1.200000000000017" fill="#c8c8c8" />
<rect x="1718.2" y="230.6" width="1.2000000000000455" height="1.200000000000017" fill="#c8c8c8" />
<path d="M1763.65,228.7 L1767.4,232.5 L1771.15,228.7" fill="none" stroke="#e0e0e0" stroke-width="1.4"/>
<path d="M1820.4,226.6 V236.6 L1825,231.6 Z" fill="none" stroke="#c8c8c8" stroke-width="1"/><path d="M1833,226.6 V236.6 L1828.4,231.6 Z" fill="#c8c8c8"/><path d="M1826.7,225 V238.4" stroke="#c8c8c8" stroke-width="1" stroke-dasharray="1 1"/>
<path d="M1845.6,225.2 H1855.6 L1850.6,229.8 Z" fill="#c8c8c8"/><path d="M1845.6,238 H1855.6 L1850.6,233.4 Z" fill="none" stroke="#c8c8c8" stroke-width="1"/><path d="M1844,231.6 H1857.4" stroke="#c8c8c8" stroke-width="1" stroke-dasharray="1 1"/>
<circle cx="1888" cy="252" r="1.45" fill="#d4d4d4"/>
<circle cx="1893" cy="252" r="1.45" fill="#d4d4d4"/>
<circle cx="1898" cy="252" r="1.45" fill="#d4d4d4"/>
<rect x="1684" y="332.8" width="8" height="8" fill="#4a4a4a" stroke="#161616" stroke-width="1.6"/>
<line x1="1680" y1="344.6" x2="1696" y2="329" stroke="#f1131d" stroke-width="1.9" />
<line x1="1709" y1="345" x2="1737" y2="345" stroke="#d0d0d0" stroke-width="1" stroke-dasharray="1 1"/>
<path d="M1764.15,333.8 L1767.15,330.8 L1770.15,333.8" fill="none" stroke="#e0e0e0" stroke-width="1.3"/>
<path d="M1764.15,339.8 L1767.15,342.8 L1770.15,339.8" fill="none" stroke="#e0e0e0" stroke-width="1.3"/>
<path d="M1814.25,335.1 L1818,338.9 L1821.75,335.1" fill="none" stroke="#e0e0e0" stroke-width="1.4"/>
<rect x="1681.0" y="359.0" width="3.5" height="3.3999999999999773" fill="#707070" />
<rect x="1688.0" y="359.0" width="3.5" height="3.3999999999999773" fill="#707070" />
<rect x="1684.5" y="362.4" width="3.5" height="3.3999999999999773" fill="#707070" />
<rect x="1691.5" y="362.4" width="3.5" height="3.3999999999999773" fill="#707070" />
<rect x="1681.0" y="365.8" width="3.5" height="3.3999999999999773" fill="#707070" />
<rect x="1688.0" y="365.8" width="3.5" height="3.3999999999999773" fill="#707070" />
<rect x="1684.5" y="369.2" width="3.5" height="3.3999999999999773" fill="#707070" />
<rect x="1691.5" y="369.2" width="3.5" height="3.3999999999999773" fill="#707070" />
<line x1="1709" y1="374.2" x2="1742" y2="374.2" stroke="#d0d0d0" stroke-width="1" stroke-dasharray="1 1"/>
<path d="M1815.6999999999998,362.25 L1819.5,366 L1815.6999999999998,369.75" fill="none" stroke="#e0e0e0" stroke-width="1.4"/>
<path d="M1697.6,404 H1700.4 L1699,405.8 Z" fill="#c8c8c8"/>
<circle cx="1888" cy="424" r="1.45" fill="#d4d4d4"/>
<circle cx="1893" cy="424" r="1.45" fill="#d4d4d4"/>
<circle cx="1898" cy="424" r="1.45" fill="#d4d4d4"/>
<circle cx="1686" cy="478.8" r="3.3" fill="none" stroke="#c8c8c8" stroke-width="1.2"/><line x1="1688.4" y1="481.4" x2="1691.8" y2="485" stroke="#c8c8c8" stroke-width="1.3"/>
<path d="M1693.5,479.09999999999997 L1696,481.7 L1698.5,479.09999999999997" fill="none" stroke="#c8c8c8" stroke-width="1.1"/>
<path d="M1885.45,478.1 L1889.2,481.9 L1892.95,478.1" fill="none" stroke="#e0e0e0" stroke-width="1.4"/>
<path d="M1885.45,504.1 L1889.2,507.9 L1892.95,504.1" fill="none" stroke="#e0e0e0" stroke-width="1.4"/>
<path d="M1686.6,524.6 H1697 V527.6 H1696 L1695.6,526.2 H1693 V536.2 L1694.4,536.6 V537.8 H1689.2 V536.6 L1690.6,536.2 V526.2 H1688 L1687.6,527.6 H1686.6 Z" fill="#c8c8c8"/><path d="M1679.4,529.6 H1686 V531.8 H1685.2 L1685,530.8 H1683.6 V536.4 L1684.6,536.8 V537.8 H1680.8 V536.8 L1681.8,536.4 V530.8 H1680.4 L1680.2,531.8 H1679.4 Z" fill="#c8c8c8"/>
<path d="M1706.65,528.7 L1709.65,525.7 L1712.65,528.7" fill="none" stroke="#e0e0e0" stroke-width="1.3"/>
<path d="M1706.65,534.7 L1709.65,537.7 L1712.65,534.7" fill="none" stroke="#e0e0e0" stroke-width="1.3"/>
<path d="M1768.25,529.9 L1772,533.6999999999999 L1775.75,529.9" fill="none" stroke="#e0e0e0" stroke-width="1.4"/>
<path d="M1804.655,529.4000000000001 L1807.6,523.2 L1810.5449999999998,529.4000000000001 M1805.8329999999999,527.0440000000001 H1809.367" fill="none" stroke="#c8c8c8" stroke-width="1"/>
<path d="M1804.655,537.6 L1807.6,531.4 L1810.5449999999998,537.6 M1805.8329999999999,535.244 H1809.367" fill="none" stroke="#c8c8c8" stroke-width="1"/>
<path d="M1799,527 V537.4 M1797,529.4 L1799,526.6 L1801,529.4 M1797,535.4 L1799,538.2 L1801,535.4" fill="none" stroke="#c8c8c8" stroke-width="1"/>
<line x1="1802.6" y1="530.4" x2="1812.6" y2="530.4" stroke="#c8c8c8" stroke-width="0.8" />
<line x1="1802.6" y1="538.4" x2="1812.6" y2="538.4" stroke="#c8c8c8" stroke-width="0.8" />
<path d="M1823.65,528.7 L1826.65,525.7 L1829.65,528.7" fill="none" stroke="#e0e0e0" stroke-width="1.3"/>
<path d="M1823.65,534.7 L1826.65,537.7 L1829.65,534.7" fill="none" stroke="#e0e0e0" stroke-width="1.3"/>
<path d="M1885.45,529.9 L1889.2,533.6999999999999 L1892.95,529.9" fill="none" stroke="#e0e0e0" stroke-width="1.4"/>
<path d="M1696.6,564.6 H1689 M1691.4,562.4 L1688.8,564.6 L1691.4,566.8" fill="none" stroke="#c8c8c8" stroke-width="1"/>
<path d="M1706.65,554.8 L1709.65,551.8 L1712.65,554.8" fill="none" stroke="#e0e0e0" stroke-width="1.3"/>
<path d="M1706.65,560.8 L1709.65,563.8 L1712.65,560.8" fill="none" stroke="#e0e0e0" stroke-width="1.3"/>
<path d="M1768.25,556.1 L1772,559.9 L1775.75,556.1" fill="none" stroke="#e0e0e0" stroke-width="1.4"/>
<path d="M1796.6,564.6 H1813.4 M1799,562.4 L1796.4,564.6 L1799,566.8 M1811,562.4 L1813.6,564.6 L1811,566.8" fill="none" stroke="#c8c8c8" stroke-width="1"/>
<path d="M1823.65,554.8 L1826.65,551.8 L1829.65,554.8" fill="none" stroke="#e0e0e0" stroke-width="1.3"/>
<path d="M1823.65,560.8 L1826.65,563.8 L1829.65,560.8" fill="none" stroke="#e0e0e0" stroke-width="1.3"/>
<path d="M1885.45,556.1 L1889.2,559.9 L1892.95,556.1" fill="none" stroke="#e0e0e0" stroke-width="1.4"/>
<circle cx="1888" cy="582" r="1.45" fill="#d4d4d4"/>
<circle cx="1893" cy="582" r="1.45" fill="#d4d4d4"/>
<circle cx="1898" cy="582" r="1.45" fill="#d4d4d4"/>
<rect x="1685" y="633.0" width="15" height="1.0" fill="#c8c8c8" />
<rect x="1685" y="636.0" width="11" height="1.0" fill="#c8c8c8" />
<rect x="1685" y="639.0" width="15" height="1.0" fill="#c8c8c8" />
<rect x="1685" y="642.0" width="11" height="1.0" fill="#c8c8c8" />
<rect x="1685" y="645.0" width="15" height="1.0" fill="#c8c8c8" />
<rect x="1716" y="633.0" width="14" height="1.0" fill="#ffffff" />
<rect x="1717" y="636.0" width="12" height="1.0" fill="#ffffff" />
<rect x="1716" y="639.0" width="14" height="1.0" fill="#ffffff" />
<rect x="1717" y="642.0" width="12" height="1.0" fill="#ffffff" />
<rect x="1716" y="645.0" width="14" height="1.0" fill="#ffffff" />
<rect x="1746" y="633.0" width="15" height="1.0" fill="#c8c8c8" />
<rect x="1750" y="636.0" width="11" height="1.0" fill="#c8c8c8" />
<rect x="1746" y="639.0" width="15" height="1.0" fill="#c8c8c8" />
<rect x="1750" y="642.0" width="11" height="1.0" fill="#c8c8c8" />
<rect x="1746" y="645.0" width="15" height="1.0" fill="#c8c8c8" />
<rect x="1778" y="633.0" width="14" height="1.0" fill="#c8c8c8" />
<rect x="1778" y="636.0" width="14" height="1.0" fill="#c8c8c8" />
<rect x="1778" y="639.0" width="14" height="1.0" fill="#c8c8c8" />
<rect x="1778" y="642.0" width="14" height="1.0" fill="#c8c8c8" />
<rect x="1778" y="645.0" width="11" height="1.0" fill="#c8c8c8" />
<rect x="1808" y="633.0" width="15" height="1.0" fill="#c8c8c8" />
<rect x="1808" y="636.0" width="15" height="1.0" fill="#c8c8c8" />
<rect x="1808" y="639.0" width="15" height="1.0" fill="#c8c8c8" />
<rect x="1808" y="642.0" width="15" height="1.0" fill="#c8c8c8" />
<rect x="1810" y="645.0" width="12" height="1.0" fill="#c8c8c8" />
<rect x="1839" y="633.0" width="15" height="1.0" fill="#c8c8c8" />
<rect x="1839" y="636.0" width="15" height="1.0" fill="#c8c8c8" />
<rect x="1839" y="639.0" width="15" height="1.0" fill="#c8c8c8" />
<rect x="1839" y="642.0" width="15" height="1.0" fill="#c8c8c8" />
<rect x="1843" y="645.0" width="11" height="1.0" fill="#c8c8c8" />
<rect x="1870" y="633.0" width="15" height="1.0" fill="#c8c8c8" />
<rect x="1870" y="636.0" width="15" height="1.0" fill="#c8c8c8" />
<rect x="1870" y="639.0" width="15" height="1.0" fill="#c8c8c8" />
<rect x="1870" y="642.0" width="15" height="1.0" fill="#c8c8c8" />
<rect x="1870" y="645.0" width="15" height="1.0" fill="#c8c8c8" />
<circle cx="1888" cy="666" r="1.45" fill="#d4d4d4"/>
<circle cx="1893" cy="666" r="1.45" fill="#d4d4d4"/>
<circle cx="1898" cy="666" r="1.45" fill="#d4d4d4"/>
<path d="M1685.8000000000002,719.8000000000001 H1693.4 L1697.4,723.8000000000001 V731.4 H1685.8000000000002 Z" fill="#7c7c7c" stroke="#cfcfcf" stroke-width="1"/>
<line x1="1682.4" y1="719.8000000000001" x2="1685.4" y2="719.8000000000001" stroke="#cfcfcf" stroke-width="1" />
<line x1="1685.8000000000002" y1="716.6" x2="1685.8000000000002" y2="719.6" stroke="#cfcfcf" stroke-width="1" />
<path d="M1700.0,724.5 L1703,727.5 L1706.0,724.5" fill="none" stroke="#c8c8c8" stroke-width="1.2"/>
<line x1="1720.4" y1="716" x2="1720.4" y2="734" stroke="#c9c9c9" stroke-width="1" />
<rect x="1722.8000000000002" y="718.2" width="7.199999999999818" height="5.199999999999932" fill="#c9c9c9" />
<rect x="1722.8000000000002" y="725.7" width="12.199999999999818" height="5.0" fill="#c9c9c9" />
<line x1="1757.6" y1="716" x2="1757.6" y2="734" stroke="#c9c9c9" stroke-width="1" />
<rect x="1753.6" y="718.2" width="8.400000000000091" height="5.199999999999932" fill="#c9c9c9" />
<rect x="1751.1" y="725.7" width="13.0" height="5.0" fill="#c9c9c9" />
<line x1="1795.4" y1="716" x2="1795.4" y2="734" stroke="#c9c9c9" stroke-width="1" />
<rect x="1786.6000000000001" y="718.2" width="6.7999999999999545" height="5.199999999999932" fill="#c9c9c9" />
<rect x="1780.8000000000002" y="725.7" width="12.599999999999909" height="5.0" fill="#c9c9c9" />
<line x1="1809" y1="717.2" x2="1827" y2="717.2" stroke="#c9c9c9" stroke-width="1" />
<rect x="1812" y="719.0" width="5.400000000000091" height="12.600000000000023" fill="#c9c9c9" />
<rect x="1819.6" y="719.0" width="5.400000000000091" height="7.400000000000091" fill="#c9c9c9" />
<line x1="1839" y1="724.6" x2="1857" y2="724.6" stroke="#c9c9c9" stroke-width="1" />
<rect x="1842.2" y="718.0" width="5.2000000000000455" height="13.200000000000045" fill="#c9c9c9" />
<rect x="1849.4" y="720.2" width="5.0" height="8.799999999999955" fill="#c9c9c9" />
<line x1="1869" y1="733" x2="1887.4" y2="733" stroke="#c9c9c9" stroke-width="1" />
<rect x="1872.1" y="718.4" width="5.300000000000182" height="13.0" fill="#c9c9c9" />
<rect x="1880.5" y="723.4" width="5.5" height="8.0" fill="#c9c9c9" />
<circle cx="1888" cy="751" r="1.45" fill="#d4d4d4"/>
<circle cx="1893" cy="751" r="1.45" fill="#d4d4d4"/>
<circle cx="1898" cy="751" r="1.45" fill="#d4d4d4"/>
<path d="M132.45,1041.1 L136.2,1044.9 L139.95,1041.1" fill="none" stroke="#e0e0e0" stroke-width="1.4"/>
<path d="M205.65,1041.1 L209.4,1044.9 L213.15,1041.1" fill="none" stroke="#e0e0e0" stroke-width="1.4"/>
<path d="M228.4,1038 V1046 M236,1038 L230.4,1042 L236,1046 Z" fill="#7c7c7c" stroke="#7c7c7c" stroke-width="1.4"/><path d="M251.6,1038 L246,1042 L251.6,1046 Z" fill="#7c7c7c"/>
<path d="M305.65,1041.1 L309.4,1044.9 L313.15,1041.1" fill="none" stroke="#e0e0e0" stroke-width="1.4"/>
<path d="M329.4,1038 L335,1042 L329.4,1046 Z" fill="#7c7c7c"/><path d="M351,1038 V1046 M344.4,1038 L350,1042 L344.4,1046 Z" fill="#7c7c7c" stroke="#7c7c7c" stroke-width="1.4"/>
<path d="M567.2,1037.6 L573.2,1041.8 L567.2,1046 Z" fill="#d0d0d0"/>
<path d="M589.4,1038.1 L585.8000000000001,1041.6 L589.4,1045.1" fill="none" stroke="#9a9a9a" stroke-width="1.3"/>
<path d="M1599.6000000000001,1038.1 L1603.2,1041.6 L1599.6000000000001,1045.1" fill="none" stroke="#9a9a9a" stroke-width="1.3"/>
<path d="M9.8,1059.4 L16.6,1058.4 V1064.6 H9.8 Z M17.6,1058.2 L26.4,1057 V1064.6 H17.6 Z M9.8,1065.6 H16.6 V1071.8 L9.8,1070.8 Z M17.6,1065.6 H26.4 V1073.2 L17.6,1072 Z" fill="#ffffff"/>
<circle cx="56.6" cy="1063" r="5.4" fill="none" stroke="#ffffff" stroke-width="1.5"/><path d="M52.8,1067 L46.6,1072.4" stroke="#ffffff" stroke-width="1.7"/>
<circle cx="90" cy="1065" r="6.6" fill="none" stroke="#ffffff" stroke-width="2.1"/>
<rect x="119.4" y="1061.2" width="10" height="7.4" fill="none" stroke="#ffffff" stroke-width="1.3"/><path d="M118,1058.2 H128.4 M118,1071.4 H128.4 M132.6,1058 V1060 M132.6,1062.6 V1068.6 M132.6,1070.6 V1072" stroke="#ffffff" stroke-width="1.3" fill="none"/>
<path d="M157,1059 H162.6 L164,1060.6 H173 V1071.2 H157 Z" fill="#f8c646"/><path d="M157,1062.6 H173.2 V1071.4 H157 Z" fill="#fbd968"/><path d="M160.6,1066.6 H169.6 V1071.4 H166.8 V1069 H163.4 V1071.4 H160.6 Z" fill="#3b8ad8"/>
<circle cx="202" cy="1065" r="7.6" fill="#e04538"/><path d="M202,1065 L195.4,1061.2 A7.6,7.6 0 0 0 199,1072 L202.6,1065.8 Z" fill="#2ea053"/><path d="M202,1065 L198.4,1071.6 A7.6,7.6 0 0 0 209.4,1063 L202,1063 Z" fill="#f6c231"/><path d="M195.4,1061.2 A7.6,7.6 0 0 1 209.4,1063 H202 Z" fill="#e04538"/><circle cx="202" cy="1065" r="3.5" fill="#fff"/><circle cx="202" cy="1065" r="2.7" fill="#4a8af4"/>
<rect x="230.8" y="1057" width="16.4" height="16" rx="4.4" fill="#f6c51c"/><circle cx="239.2" cy="1064.6" r="4.2" fill="none" stroke="#2c2a22" stroke-width="1.8"/><path d="M237.4,1063 V1070.4 M237.4,1066 H240.4" stroke="#2c2a22" stroke-width="1.6" fill="none"/>
<rect x="150.8" y="1078" width="28.19999999999999" height="2" fill="#76b9ed" />
<rect x="188" y="1078" width="27.80000000000001" height="2" fill="#76b9ed" />
<rect x="225" y="1078" width="28" height="2" fill="#76b9ed" />
<rect x="258" y="1078" width="36" height="2" fill="#76b9ed" />
<rect x="171.4" y="1078" width="0.5999999999999943" height="2" fill="#4b7fa8" />
<path d="M1583,1071 C1579.6,1071 1578,1069 1578.4,1066.8 C1578.8,1064.8 1580.6,1063.8 1582.2,1064 C1582.6,1060.4 1585.4,1058 1588.8,1058 C1591.8,1058 1594,1059.8 1594.8,1062.4 C1597.4,1062.4 1599.2,1064.2 1599.2,1066.6 C1599.2,1069.2 1597.2,1071 1594.6,1071 Z" fill="#eef3f8"/><path d="M1589.4,1067 C1590.8,1069 1591.8,1070.4 1591.8,1071.4 A2.4,2.4 0 0 1 1587,1071.4 C1587,1070.4 1588,1069 1589.4,1067 Z" fill="#3e95e6"/>
<path d="M1716.4,1067.6 L1722,1062 L1727.6,1067.6" fill="none" stroke="#ffffff" stroke-width="1.3"/>
<rect x="1741.4" y="1061.4" width="7" height="7.6" rx="1.6" fill="none" stroke="#ffffff" stroke-width="1.1"/><path d="M1748.4,1064.4 L1751.4,1062.6 V1068 L1748.4,1066.2 M1742.4,1059 Q1745,1056.6 1748,1059 M1742.4,1071.6 Q1745,1074 1748,1071.6" fill="none" stroke="#ffffff" stroke-width="1.1"/>
<path d="M1764.4,1059.4 H1777.6 V1068 H1767.6 M1770.6,1068 V1071 M1767,1071.2 H1775 M1762.4,1059.4 H1767 V1063 H1762.4 Z M1764.6,1063 V1071.4" fill="none" stroke="#ffffff" stroke-width="1.1"/>
<path d="M1786.4,1062.8 H1789 L1792.4,1059.4 V1070.8 L1789,1067.4 H1786.4 Z" fill="none" stroke="#ffffff" stroke-width="1.1"/><path d="M1794.6,1062.6 Q1796.2,1065 1794.6,1067.6 M1797,1060.6 Q1799.8,1065 1797,1069.6 M1799.4,1058.8 Q1803.2,1065 1799.4,1071.4" fill="none" stroke="#ffffff" stroke-width="1.1"/>
<path d="M1879.6,1057.4 H1895 V1069 H1890.4 L1887.4,1072.2 L1884.4,1069 H1879.6 Z" fill="#ffffff"/><path d="M1882.6,1060.8 H1892 M1882.6,1063.4 H1892 M1882.6,1066 H1888.6" stroke="#38342a" stroke-width="1"/>
<line x1="1915.4" y1="1052" x2="1915.4" y2="1080" stroke="#8a8a8a" stroke-width="1" /></svg>
</div></body></html>
